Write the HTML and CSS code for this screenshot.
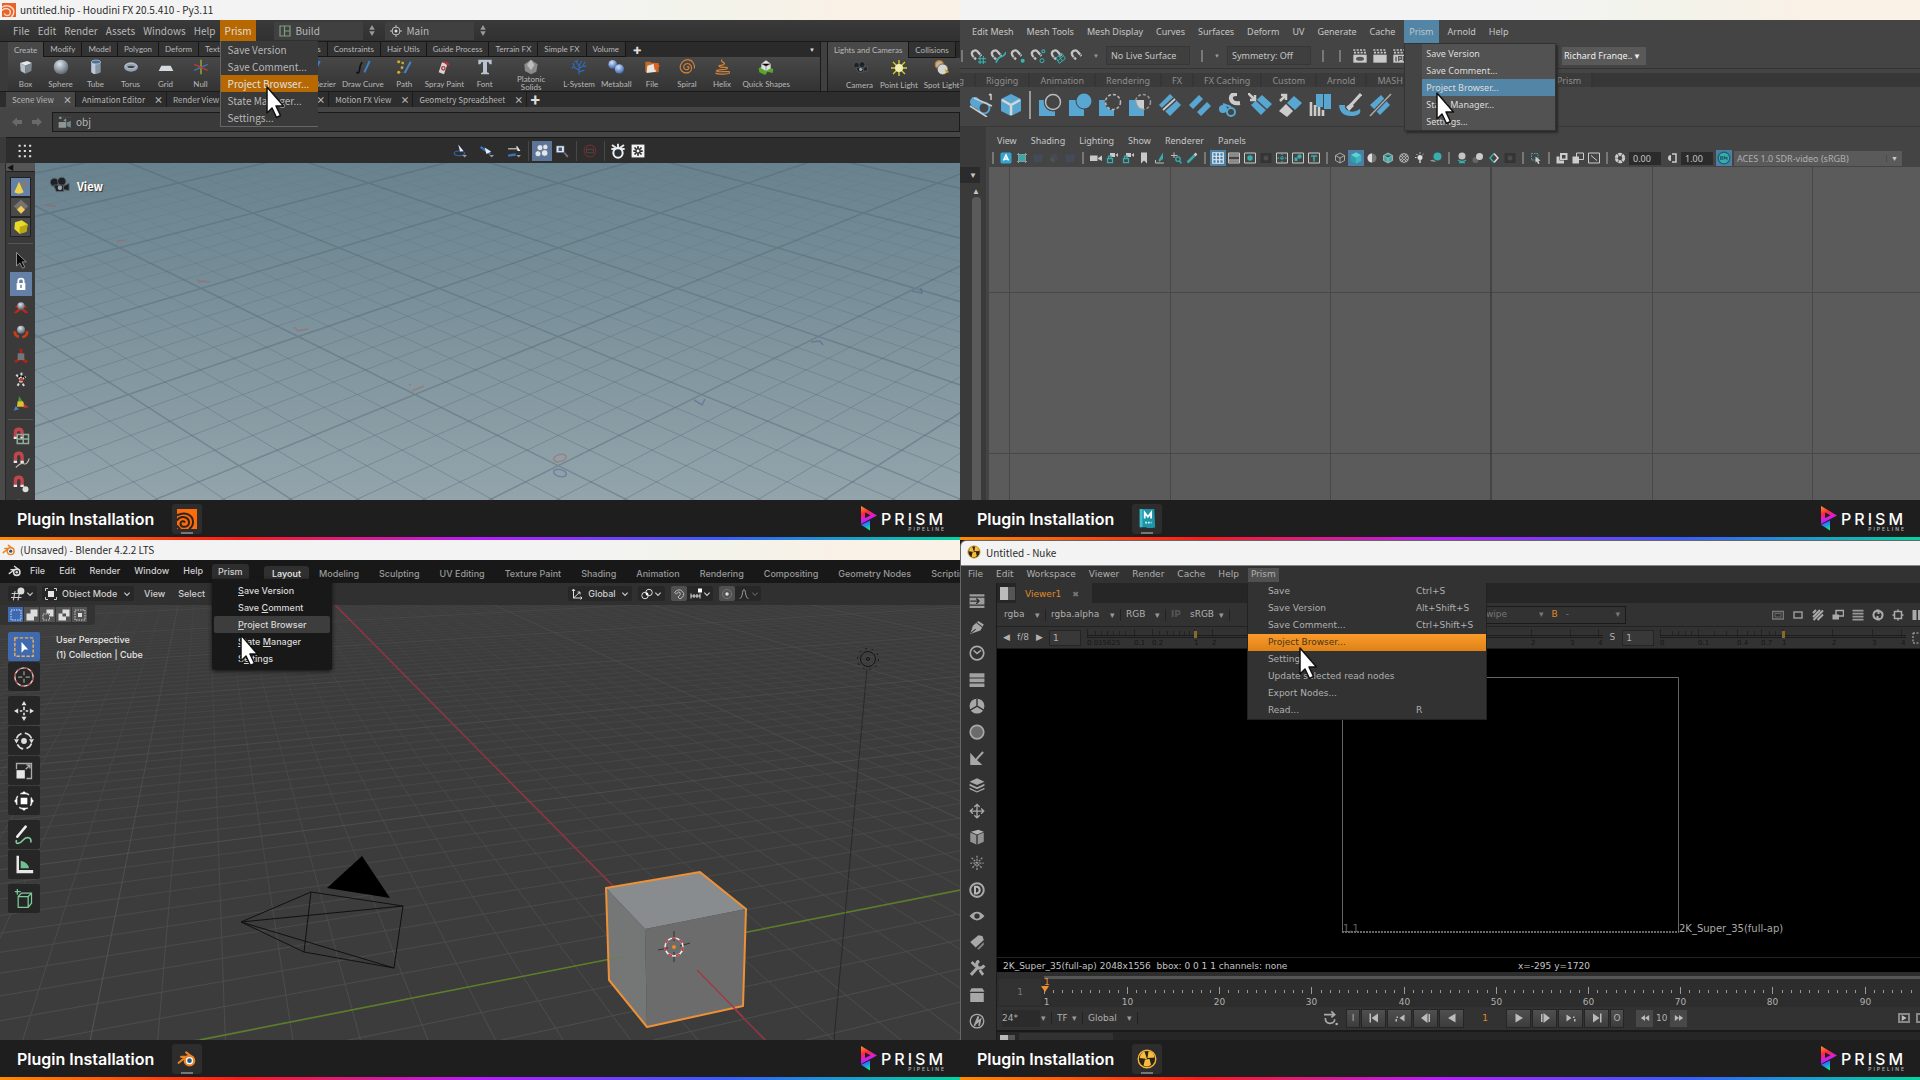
FILE: index.html
```
<!DOCTYPE html>
<html lang="en">
<head>
<meta charset="utf-8">
<title>Plugin Installation</title>
<link rel="stylesheet" href="styles.css">
</head>
<body>
<svg class="sprite" aria-hidden="true">
  <defs>
    <linearGradient id="lg-warm" x1="0" y1="0" x2="0.3" y2="1"><stop offset="0" stop-color="#ffa01c"/><stop offset=".4" stop-color="#ff2a3c"/><stop offset=".75" stop-color="#d020e8"/><stop offset="1" stop-color="#8a30ff"/></linearGradient>
    <linearGradient id="lg-cool" x1="0" y1="0" x2="0.4" y2="1"><stop offset="0" stop-color="#7a3cff"/><stop offset=".5" stop-color="#2a7bff"/><stop offset="1" stop-color="#10e090"/></linearGradient>
    <radialGradient id="ball" cx=".4" cy=".3" r=".7"><stop offset="0" stop-color="#dde4ec"/><stop offset="1" stop-color="#5c6670"/></radialGradient>
    <radialGradient id="blue-ball" cx=".4" cy=".3" r=".7"><stop offset="0" stop-color="#d5e4fa"/><stop offset="1" stop-color="#3d68ae"/></radialGradient>
  </defs>
  <symbol id="cursor" viewBox="0 0 20 34"><path d="M2 2V28L7 23L11.500 32.500L15.500 30.500L11 21H18.500Z" fill="#fff" stroke="#111" stroke-width="1.500" stroke-linejoin="round"/></symbol>
  <symbol id="prism" viewBox="0 0 16 25"><path d="M0 0L16 9.500L0 18ZM4 6.500V12L9.500 9.300Z" fill="url(#lg-warm)" fill-rule="evenodd"/><path d="M0 18.700L9 14.500V24.500Z" fill="url(#lg-cool)"/></symbol>
  <symbol id="houdini" viewBox="0 0 20 20"><path fill="#ff6a0a" d="M0 0H20V20H0Z"/><path fill="none" stroke="#2a2522" stroke-width="2" d="M0 6.500C8 2 16 6 16 13c0 3-1.500 5.500-4 7M0 11.500C2 8 6 7.500 8.500 8.500c4 1.500 4.500 6 2 8.200-2.500 2-7 1.300-7-2 0-2.500 3.500-3.500 4.500-1.200M0 16.500c1 2 2 3 3.500 3.500"/></symbol>
  <symbol id="houdini-light" viewBox="0 0 20 20"><path fill="#e8632a" d="M0 0H20V20H0Z"/><path fill="none" stroke="#fbd9c8" stroke-width="2" d="M0 6C8 1 17 6 17 13c0 3-1.500 5-4 7M0 11C2 8 6 7.500 8.500 8.500c4 1.500 4.500 6 2 8.200-2.500 2-7 1.300-7-2"/></symbol>
  <symbol id="blender" viewBox="0 0 24 20"><path fill="none" stroke="#ee8220" stroke-width="2.600" stroke-linecap="round" d="M2 14.500L11 7.500M5 7.500H16M11 2L18.500 8"/><circle cx="15" cy="12" r="7" fill="#ee8220"/><circle cx="15" cy="12" r="4.400" fill="#fff"/><circle cx="15" cy="12" r="2.800" fill="#265787"/></symbol>
  <symbol id="blender-white" viewBox="0 0 24 20"><path fill="none" stroke="#ddd" stroke-width="2.200" stroke-linecap="round" d="M2 14.500L11 7.500M5 7.500H16M11 2L18.500 8"/><circle cx="15" cy="12" r="5.500" fill="none" stroke="#ddd" stroke-width="2.600"/><circle cx="15" cy="12" r="2.200" fill="#ddd"/></symbol>
  <symbol id="maya" viewBox="0 0 20 22"><path fill="#1f93a8" d="M2 0H18L19 20Q14 22 8 20H2Z"/><path fill="#3cc0cf" d="M2 0H5V20H2Z"/><path fill="none" stroke="#f4ffff" stroke-width="2" d="M7.500 10.500V4L11 8.500L14.500 4V10.500"/><path stroke="#c9f2f5" stroke-width="2" stroke-dasharray="2 1" d="M8 15H15"/></symbol>
  <symbol id="nuke" viewBox="0 0 20 20"><circle cx="10" cy="10" r="8.800" fill="#2b2416" stroke="#f3b637" stroke-width="1.400"/><path fill="#f8bd3e" d="M10 10L2.800 9C3 5.500 5 3.200 7.500 2.500ZM10.500 9L11.500 2.300C15 2.500 17 5 17.500 8.500ZM8 10.500L12.500 10L14 15.500C12 18 8.500 18 6.500 16.500Z"/></symbol>

  <symbol id="box3d" viewBox="0 0 24 24"><path fill="#e4e8ec" d="M3 6L14 3L21 6L11 10Z"/><path fill="#b6bec6" d="M3 6L11 10V22L4 18Z"/><path fill="#7d8791" d="M11 10L21 6L20 18L11 22Z"/></symbol>
  <symbol id="sphere" viewBox="0 0 24 24"><circle cx="12" cy="12" r="11" fill="url(#ball)"/></symbol>
  <symbol id="tube" viewBox="0 0 24 24"><path fill="#8796a5" d="M5 4V20Q12 25 19 20V4Z"/><path fill="#bccada" d="M5 4V20Q8 23 11 23V4Z"/><ellipse cx="12" cy="4.500" rx="7" ry="3" fill="#4b6f98" stroke="#ccd6e0"/></symbol>
  <symbol id="torus" viewBox="0 0 24 24"><ellipse cx="12" cy="12" rx="8" ry="4.500" fill="none" stroke="#94a2b5" stroke-width="5"/><ellipse cx="12" cy="10.500" rx="8.500" ry="4" fill="none" stroke="#c9d0da" stroke-width="1"/></symbol>
  <symbol id="gridp" viewBox="0 0 24 24"><path fill="#d5dae0" d="M5 10H19L23 18H1Z"/></symbol>
  <symbol id="null" viewBox="0 0 24 24"><path d="M12 1V23" stroke="#a5b32d" stroke-width="2"/><path d="M2 17L22 8" stroke="#3b76b8" stroke-width="2"/><path d="M2 8L22 17" stroke="#c33930" stroke-width="2"/></symbol>
  <symbol id="curve" viewBox="0 0 24 24"><path d="M2 20C10 24 4 10 11 5" stroke="#111" stroke-width="2.500" fill="none"/><path d="M14 20L22 3" stroke="#3f80c4" stroke-width="3"/></symbol>
  <symbol id="path" viewBox="0 0 24 24"><path d="M4 4H11V12L4 20H12" stroke="#555" fill="none"/><g fill="#d6ad22"><circle cx="4" cy="4" r="2.300"/><circle cx="10" cy="6" r="2"/><circle cx="9" cy="13" r="2"/><circle cx="4" cy="20" r="2.300"/></g><path d="M13 21L22 4" stroke="#4785c0" stroke-width="3"/></symbol>
  <symbol id="spray" viewBox="0 0 24 24"><path fill="#d8d4d4" d="M9 5L17 8L12 23L4 20Z"/><path fill="#bb2e36" d="M10 3L18 5L21 10L16 9Z"/><circle cx="11" cy="14" r="2.500" fill="none" stroke="#b93a3a" stroke-width="2"/></symbol>
  <symbol id="fontt" viewBox="0 0 24 24"><path fill="#b9c3cf" d="M2 1H22V8H19L17 4.500H15V20L18 21V23H6V21L9 20V4.500H7L5 8H2Z"/></symbol>
  <symbol id="platonic" viewBox="0 0 24 24"><path fill="#8b8b8b" d="M12 1L22 8L20 19L12 23L3 18L2 8Z"/><path fill="#bdbdbd" d="M12 1L17 9L12 17L6 9Z"/></symbol>
  <symbol id="lsys" viewBox="0 0 24 24"><path d="M12 23V10M12 17L4 12L1 14M5 12L3 6M12 14L19 10L23 12M18 10L21 4M12 11L8 4L5 3M8 5L10 1M12 11L16 3M12 19L20 17" stroke="#2f6cb9" stroke-width="1.700" fill="none"/></symbol>
  <symbol id="meta" viewBox="0 0 24 24"><circle cx="7" cy="8" r="6.500" fill="url(#blue-ball)"/><circle cx="17" cy="15" r="7" fill="url(#blue-ball)"/></symbol>
  <symbol id="file" viewBox="0 0 24 24"><path fill="#c46a28" d="M2 4H10L12 6H22V20H2Z"/><path fill="#e9e6e2" d="M5 10L15 7L18 19L4 21Z"/><path fill="#e0601c" d="M14 5L24 10L16 17Z"/></symbol>
  <symbol id="spiral" viewBox="0 0 24 24"><path fill="none" stroke="#cf8136" stroke-width="1.800" d="M12 12c2-2 4 1 2 3s-7 1-7-3 5-7 9-4 4 10-1 12-12 0-13-6S6 1 13 1s11 7 10 13"/></symbol>
  <symbol id="helix" viewBox="0 0 24 24"><path fill="none" stroke="#cf8136" stroke-width="1.900" d="M12 1C9 5 18 5 15 8S6 8 8 11s13 0 12 3-17 1-16 4 21-1 20 2-18 4-22 1"/></symbol>
  <symbol id="quick" viewBox="0 0 24 24"><path fill="#5aa52c" d="M1 14L8 10L23 15L22 21L14 19L11 24L2 20Z"/><path fill="#dcdfe0" d="M5 7L12 2L19 7V14L12 18L5 14Z"/><path stroke="#777" d="M5 7L12 11L19 7M12 11V18"/></symbol>
  <symbol id="cam" viewBox="0 0 24 24"><g fill="#1d2024" stroke="#5a6268"><circle cx="7" cy="8" r="4.500"/><circle cx="15" cy="7" r="4.500"/><path d="M6 11H17V18H9Z"/><path d="M17 12L23 9V17L17 16Z"/></g><circle cx="13" cy="14" r="2.500" fill="#9aa4ad"/></symbol>
  <symbol id="bulb" viewBox="0 0 24 24"><path stroke="#d8d02b" stroke-width="2" d="M12 0V24M0 12H24M3 3L21 21M21 3L3 21"/><circle cx="12" cy="12" r="6" fill="#f2efb4"/></symbol>
  <symbol id="spot" viewBox="0 0 24 24"><circle cx="8" cy="7" r="6" fill="#b8b4a8" stroke="#c87a24" stroke-width="2"/><circle cx="13" cy="14" r="8" fill="#d6d5d0" stroke="#444"/><path fill="#cfa51e" d="M16 13L23 18L18 20Z"/></symbol>
  <symbol id="cone" viewBox="0 0 24 24"><circle cx="16" cy="8" r="6.500" fill="#777d84"/><path fill="#f0d04d" d="M9 4L16 20Q9 24 2 20Z"/></symbol>
  <symbol id="diamond" viewBox="0 0 24 24"><path fill="#77736b" d="M12 1L23 11L12 21L1 11Z"/><path fill="#f0cd5d" d="M12 10L18 16L12 22L6 16Z"/></symbol>
  <symbol id="ycube" viewBox="0 0 24 24"><path fill="#e8d92a" d="M3 5L13 2L22 8L20 19L10 22L2 15Z"/><path fill="#b9a70e" d="M10 12L22 8L20 19L10 22Z"/></symbol>
  <symbol id="arrow-b" viewBox="0 0 24 24"><path fill="#0b0b0b" stroke="#999" stroke-width="1.200" d="M6 2V20L10.500 16L14 23L17 21.500L13.500 14.500H19Z"/></symbol>
  <symbol id="lock" viewBox="0 0 24 24"><path fill="none" stroke="#fff" stroke-width="2.600" d="M8 11V7.500Q8 4 12 4T16 7.500V11"/><path fill="#fff" d="M5.500 10.500H18.500V21H5.500Z"/><path stroke="#5a7398" stroke-width="2" d="M12 13V18"/></symbol>
  <symbol id="handle1" viewBox="0 0 24 24"><path fill="#c32715" d="M1 19L9 12L12 15L5 20ZM23 19L15 12L12 15L19 20ZM4 9L9 7V11L4 12ZM20 9L15 7V11L20 12Z"/><circle cx="12" cy="9" r="5.500" fill="url(#ball)"/></symbol>
  <symbol id="handle2" viewBox="0 0 24 24"><path fill="none" stroke="#cf3b16" stroke-width="4" d="M3 11Q2 17 9 19M21 11Q22 17 14 20"/><circle cx="12" cy="8.500" r="6" fill="url(#ball)"/></symbol>
  <symbol id="handle3" viewBox="0 0 24 24"><path fill="#b32314" d="M10 1H14V9H10ZM1 20L9 15L12 18L5 22ZM23 20L15 15L12 18L19 23Z"/><path fill="#70777c" d="M7 8H17V18H7Z"/></symbol>
  <symbol id="bones" viewBox="0 0 24 24"><path stroke="#d9d9d9" stroke-width="3" stroke-dasharray="4 2" d="M5 4L12 12L19 7M13 1L11 13M12 12L6 22M12 12L17 22"/><path fill="#c3402f" d="M10 9H15V14H10Z"/></symbol>
  <symbol id="gizmo" viewBox="0 0 24 24"><path fill="#3fa62c" d="M9 0L14 8H8Z"/><path fill="#d8c32a" d="M7 8H15L18 16H6Z"/><path fill="#c93434" d="M16 12L24 17L16 18Z"/><path fill="#4d7ec2" d="M1 22L4 15L9 20Z"/></symbol>
  <symbol id="mag-r" viewBox="0 0 24 24"><path fill="none" stroke="#c0464c" stroke-width="4.500" d="M4.500 14V8Q4.500 3 9 3T13.500 8V14"/><path stroke="#e9e9e9" stroke-width="4.500" d="M4.500 13V16M13.500 13V16"/></symbol>
  <symbol id="disc-cursor" viewBox="0 0 24 24"><ellipse cx="11" cy="16" rx="9" ry="4" fill="none" stroke="#33619d" stroke-width="2"/><path fill="#e6ecf2" d="M9 1L18 12L12 13Z"/><path fill="#999" d="M16 19H24L20 23Z"/></symbol>
  <symbol id="line-cursor" viewBox="0 0 24 24"><path stroke="#3a72bb" stroke-width="4" d="M1 5L18 17"/><path fill="#e6ecf2" d="M8 6L19 13L11 17Z"/><path fill="#999" d="M16 19H24L20 23Z"/></symbol>
  <symbol id="flow-cursor" viewBox="0 0 24 24"><path fill="none" stroke="#3a72bb" stroke-width="4" d="M2 20L15 18"/><path fill="none" stroke="#aaa" stroke-width="2.500" d="M2 8H18L16 4"/><path fill="#e6ecf2" d="M17 3L23 12L18 12Z"/><path fill="#999" d="M16 19H24L20 23Z"/></symbol>
  <symbol id="dots" viewBox="0 0 24 24"><path stroke="#ddd" stroke-width="3.600" stroke-dasharray="3.600 5.400" d="M1 3H23M1 12H23M1 21H23"/></symbol>
  <symbol id="bubbles" viewBox="0 0 24 24"><g fill="#e3e5e8" stroke="#4c6384"><circle cx="9" cy="7" r="4.500"/><circle cx="17" cy="6" r="4"/><circle cx="6" cy="16" r="4.500"/><circle cx="16" cy="15" r="5"/></g></symbol>
  <symbol id="zoomrect" viewBox="0 0 24 24"><path fill="#e6e6e6" stroke="#20304e" d="M2 3H16V15H2Z"/><path fill="#3c5c8e" d="M6 6H12V12H6Z"/><path stroke="#777" stroke-width="3" d="M16 15L22 22"/></symbol>
  <symbol id="stop" viewBox="0 0 24 24"><circle cx="12" cy="12" r="10" fill="none" stroke="#6e2e2e" stroke-width="2"/><path fill="none" stroke="#5c4a4a" stroke-width="1.500" d="M6 9H18V15H6Z"/></symbol>
  <symbol id="bee" viewBox="0 0 24 24"><path stroke="#e4e4e4" stroke-width="3" d="M3 3L10 8M21 3L14 8M2 9H22M12 1V8"/><circle cx="12" cy="15" r="7" fill="#283038" stroke="#f0f0f0" stroke-width="3"/></symbol>
  <symbol id="gearbox" viewBox="0 0 24 24"><path fill="#f2f2f2" d="M1 1H23V23H1Z"/><path stroke="#2c2c2c" stroke-width="3" d="M12 4V20M4 12H20M6 6L18 18M18 6L6 18"/><circle cx="12" cy="12" r="2.500" fill="#f2f2f2"/></symbol>
  <symbol id="back" viewBox="0 0 24 24"><path fill="#6a6a6a" d="M2 12L12 3V8H22V16H12V21Z"/></symbol>
  <symbol id="fwd" viewBox="0 0 24 24"><path fill="#6a6a6a" d="M22 12L12 3V8H2V16H12V21Z"/></symbol>
  <symbol id="layout" viewBox="0 0 24 24"><path fill="none" stroke="#7fa080" stroke-width="2.400" d="M2 2H22V22H2ZM11 2V22M11 12H22"/></symbol>
  <symbol id="target" viewBox="0 0 24 24"><circle cx="12" cy="12" r="8" fill="none" stroke="#bbb" stroke-width="2"/><circle cx="12" cy="12" r="3" fill="#ddd"/><path stroke="#bbb" stroke-width="2" d="M12 0V6M12 18V24M0 12H6M18 12H24"/></symbol>
  <symbol id="objnet" viewBox="0 0 24 24"><path fill="#8f9594" d="M2 3H6V7H2ZM9 9L14 6V12ZM1 12H14V22H1Z"/><path fill="#6f8a86" d="M15 13L22 10V22L15 19Z"/><path stroke="#666" stroke-dasharray="2 2" d="M8 4H22"/></symbol>
  <symbol id="updown" viewBox="0 0 8 14"><path fill="#999" d="M4 0L7.500 6H.5ZM4 14L.5 8H7.500Z"/></symbol>

  <symbol id="magnet" viewBox="0 0 24 24"><path fill="none" stroke="#c4c4c4" stroke-width="3.400" d="M4 12Q1 7 5 4.500T12 6L17 12M4 12L9 17"/><path stroke="#444" stroke-width="1.500" d="M5 15L8 12M13 13L17 9"/></symbol>
  <symbol id="m-grid" viewBox="0 0 24 24"><path d="M12 16H24M12 21H24M15 12V24M20 12V24" stroke="#37b5b5" stroke-width="1.500"/></symbol>
  <symbol id="m-curve" viewBox="0 0 24 24"><path d="M9 22Q12 14 17 13T24 6" stroke="#37b5b5" stroke-width="2.500" fill="none"/></symbol>
  <symbol id="m-dot" viewBox="0 0 24 24"><circle cx="19" cy="19" r="3" fill="#37b5b5"/></symbol>
  <symbol id="m-pts" viewBox="0 0 24 24"><g fill="none" stroke="#37b5b5" stroke-width="1.500"><path d="M18 3H22V7H18Z"/><circle cx="18" cy="19" r="3"/></g></symbol>
  <symbol id="m-plane" viewBox="0 0 24 24"><path d="M9 15L18 8L23 16L14 23ZM12 19L20 12M13 11L18 19" fill="none" stroke="#37b5b5" stroke-width="1.500"/></symbol>
  <symbol id="clap" viewBox="0 0 24 24"><path fill="#c9c9c9" d="M2 10H22V22H2Z"/><path stroke="#c9c9c9" stroke-width="2.500" stroke-dasharray="3 2" d="M2 3H22M3 7H22"/></symbol>
  <symbol id="sh-pipes" viewBox="0 0 24 24"><path fill="#58a7d3" d="M3 4L13 9V19L3 13Z"/><circle cx="6" cy="9" r="5" fill="#58a7d3"/><circle cx="15" cy="15" r="5.500" fill="#444" stroke="#58a7d3" stroke-width="2"/><path stroke="#ccc" stroke-width="1.500" d="M1 13L18 24M5 5L23 13M22 1V7M20 2L22 1"/></symbol>
  <symbol id="sh-cube" viewBox="0 0 24 24"><path fill="#58a7d3" d="M12 1L22 6V18L12 23L2 18V6Z"/><path fill="none" stroke="#d5d5d5" stroke-width="2.500" d="M3 7L12 12L21 7M12 12V22"/></symbol>
  <symbol id="sh-diff" viewBox="0 0 24 24"><path fill="#58a7d3" d="M1 7H17V23H1Z"/><circle cx="15" cy="9" r="9.500" fill="#444"/><circle cx="15" cy="9" r="7.500" fill="none" stroke="#bbb" stroke-width="1.500"/><path fill="none" stroke="#58a7d3" stroke-width="1.500" d="M5 9A9 9 0 0 0 14 19"/></symbol>
  <symbol id="sh-union" viewBox="0 0 24 24"><path fill="#58a7d3" d="M1 7H16V23H1Z"/><circle cx="16" cy="8" r="8.500" fill="#444"/><circle cx="16" cy="8" r="7.500" fill="#58a7d3"/></symbol>
  <symbol id="sh-sub" viewBox="0 0 24 24"><path fill="#58a7d3" d="M1 7H7A8 8 0 0 0 16 17V23H1Z"/><circle cx="15" cy="9" r="7.500" fill="none" stroke="#bbb" stroke-width="1.500" stroke-dasharray="3 2"/></symbol>
  <symbol id="sh-int" viewBox="0 0 24 24"><path fill="#58a7d3" d="M1 7H16V23H1Z"/><path fill="#ccc" d="M8 7H16V16Q9 16 8 7Z"/><circle cx="15" cy="9" r="7.500" fill="none" stroke="#999" stroke-width="1.500" stroke-dasharray="3 2"/></symbol>
  <symbol id="sh-bridge" viewBox="0 0 24 24"><path fill="#58a7d3" d="M1 12L12 1L23 12L12 23Z"/><path stroke="#444" stroke-width="5" d="M5 17L17 6"/><path stroke="#ccc" stroke-width="1.800" d="M5 17L17 6"/></symbol>
  <symbol id="sh-open" viewBox="0 0 24 24"><path fill="#58a7d3" d="M1 12L11 2L15 6L5 16ZM9 19L19 9L23 13L13 23Z"/></symbol>
  <symbol id="sh-wrench" viewBox="0 0 24 24"><circle cx="5" cy="16" r="4" fill="#58a7d3"/><circle cx="13" cy="19" r="4" fill="none" stroke="#58a7d3" stroke-width="2"/><path fill="none" stroke="#ccc" stroke-width="4" d="M19 1Q12 1 13 6T22 10"/><path stroke="#58a7d3" stroke-width="2" d="M5 11L13 14"/></symbol>
  <symbol id="sh-ext" viewBox="0 0 24 24"><path fill="#58a7d3" d="M3 12L14 2L24 11L13 22Z"/><path stroke="#444" stroke-width="1.500" d="M8 7L19 17"/><path stroke="#ccc" stroke-width="2.500" d="M0 0L6 6M7 2V7H2"/></symbol>
  <symbol id="sh-bev" viewBox="0 0 24 24"><path fill="#58a7d3" d="M9 10L16 3L24 10L17 17Z"/><path fill="#ccc" d="M1 18L8 11L15 18L9 24Z"/><path stroke="#ccc" stroke-width="2.500" d="M2 8L8 2M3 2H8V7"/></symbol>
  <symbol id="sh-comb" viewBox="0 0 24 24"><path fill="#58a7d3" d="M8 1H15V14H8ZM16 1H23V16H16Z"/><path stroke="#ccc" stroke-width="2.600" d="M3 9V23M7 12V23M11 14V23M15 17V23"/></symbol>
  <symbol id="sh-brush" viewBox="0 0 24 24"><path fill="#58a7d3" d="M1 12Q2 23 13 23T22 16Q16 20 11 18T7 12Z"/><path stroke="#ccc" stroke-width="3" d="M23 1L13 12"/><path fill="#ccc" d="M8 14L13 10L16 13L11 18Z"/></symbol>
  <symbol id="sh-cut" viewBox="0 0 24 24"><path fill="#58a7d3" d="M2 12L13 2L22 12L12 22Z"/><path stroke="#444" stroke-width="3.500" d="M2 23L23 1"/><path stroke="#aaa" stroke-width="1.500" d="M2 23L23 1"/></symbol>
  <symbol id="p-a" viewBox="0 0 24 24"><rect x="1" y="1" width="22" height="22" rx="3" fill="#35a5cf"/><path fill="none" stroke="#fff" stroke-width="3" d="M7 17L12 6L17 17M9 14H15"/></symbol>
  <symbol id="p-box" viewBox="0 0 24 24"><path fill="#35a9aa" d="M5 5H19V19H5Z"/><path stroke="#8a9a9a" stroke-width="2" fill="none" d="M2 5H22M2 19H22M5 2V22M19 2V22"/></symbol>
  <symbol id="p-dim" viewBox="0 0 24 24"><path fill="#434a58" d="M3 5H21V20H3Z"/></symbol>
  <symbol id="p-dimball" viewBox="0 0 24 24"><circle cx="12" cy="12" r="8" fill="#4b4751"/><path fill="#405a50" d="M12 12V20A8 8 0 0 1 4 12Z"/></symbol>
  <symbol id="p-cam" viewBox="0 0 24 24"><path fill="#c9c9c9" d="M0 7H15V18H0ZM16 12L24 7V18L16 14Z"/></symbol>
  <symbol id="p-camlock" viewBox="0 0 24 24"><path fill="#c9c9c9" d="M8 2H18V10H8ZM19 6L24 2V10Z"/><path fill="none" stroke="#39adad" stroke-width="2.500" d="M3 13H13V21H3ZM5 13V8H10V13"/></symbol>
  <symbol id="p-mark" viewBox="0 0 24 24"><path fill="#c9c9c9" d="M6 1H18V23L12 17L6 23Z"/></symbol>
  <symbol id="p-leaf" viewBox="0 0 24 24"><path fill="#39adad" d="M9 16L18 1V14L10 20Z"/><path fill="none" stroke="#bbb" stroke-width="2" d="M3 16V22H20"/></symbol>
  <symbol id="p-pan" viewBox="0 0 24 24"><path fill="none" stroke="#bbb" stroke-width="2" d="M8 1V12M2 7H15"/><circle cx="16" cy="14" r="4.500" fill="none" stroke="#39adad" stroke-width="2.500"/><path stroke="#39adad" stroke-width="3" d="M19 18L23 23"/></symbol>
  <symbol id="p-pen" viewBox="0 0 24 24"><path stroke="#39adad" stroke-width="5" d="M3 21L17 7"/><path stroke="#ccc" stroke-width="5" d="M17 7L21 3"/></symbol>
  <symbol id="p-grid" viewBox="0 0 24 24"><path fill="none" stroke="#e4eef4" stroke-width="2" d="M3 3H21V21H3ZM9 3V21M15 3V21M3 9H21M3 15H21"/></symbol>
  <symbol id="p-film" viewBox="0 0 24 24"><path fill="none" stroke="#c9c9c9" stroke-width="2" d="M1 2H23V22H1ZM1 8H23M1 16H23"/><path stroke="#c9c9c9" stroke-width="3" stroke-dasharray="2 2" d="M1 5H23M1 19H23"/></symbol>
  <symbol id="p-rec" viewBox="0 0 24 24"><path fill="none" stroke="#c9c9c9" stroke-width="2" d="M1 2H23V22H1Z"/><circle cx="12" cy="12" r="5.500" fill="#39adad"/></symbol>
  <symbol id="p-recdim" viewBox="0 0 24 24"><path fill="#353535" d="M1 2H23V22H1Z"/><circle cx="12" cy="12" r="5" fill="#4d4d4d"/></symbol>
  <symbol id="p-shapes" viewBox="0 0 24 24"><path fill="none" stroke="#c9c9c9" stroke-width="2" d="M1 2H23V22H1Z"/><circle cx="15" cy="9" r="4.500" fill="#39adad"/><path fill="#39adad" d="M5 11H11V18H5Z"/></symbol>
  <symbol id="p-cross" viewBox="0 0 24 24"><path fill="none" stroke="#c9c9c9" stroke-width="2" d="M1 2H23V22H1Z"/><path stroke="#39adad" stroke-width="2.500" stroke-dasharray="3 2" d="M12 3V21M3 12H21"/></symbol>
  <symbol id="p-t" viewBox="0 0 24 24"><path fill="none" stroke="#c9c9c9" stroke-width="2" d="M1 2H23V22H1Z"/><path stroke="#39adad" stroke-width="3" d="M6 8H18M12 8V19"/></symbol>
  <symbol id="p-wire" viewBox="0 0 24 24"><path fill="none" stroke="#b9b9b9" stroke-width="1.700" d="M12 2L21 7V17L12 22L3 17V7ZM3 7L12 12L21 7M12 12V22"/></symbol>
  <symbol id="p-tex" viewBox="0 0 24 24"><path fill="#39adad" stroke="#b9b9b9" stroke-width="1.700" d="M12 2L21 7V17L12 22L3 17V7ZM3 7L12 12L21 7M12 12V22"/></symbol>
  <symbol id="p-solid" viewBox="0 0 24 24"><path fill="#5fd0d4" d="M12 2L21 7L12 12L3 7Z"/><path fill="#2da2aa" d="M3 7L12 12V22L3 17Z"/><path fill="#3cb8be" d="M21 7V17L12 22V12Z"/></symbol>
  <symbol id="p-half" viewBox="0 0 24 24"><circle cx="12" cy="12" r="9" fill="#777"/><path fill="#ddd" d="M12 3V21A9 9 0 0 1 12 3Z"/></symbol>
  <symbol id="p-mesh" viewBox="0 0 24 24"><circle cx="12" cy="12" r="10" fill="#a9a9a9"/><path stroke="#484848" stroke-width="1.500" d="M5 5L19 19M9 3L21 15M3 9L15 21M19 5L5 19M15 3L3 15M21 9L9 21"/></symbol>
  <symbol id="p-light" viewBox="0 0 24 24"><circle cx="12" cy="11" r="5" fill="#ddd"/><path stroke="#ccc" stroke-width="2" stroke-dasharray="3 17" d="M2 11H22M5 4L19 18M19 4L5 18"/><path stroke="#ccc" stroke-width="3" d="M12 16V22M12 1V3"/></symbol>
  <symbol id="p-shadow" viewBox="0 0 24 24"><circle cx="12" cy="8" r="7" fill="#c5c5c5"/><path fill="none" stroke="#39adad" stroke-width="2.500" d="M4 16Q12 22 20 16M6 21H18"/></symbol>
  <symbol id="p-cast" viewBox="0 0 24 24"><circle cx="15" cy="9" r="8" fill="#39adad"/><path fill="#999" d="M0 18Q6 12 12 20Z"/></symbol>
  <symbol id="p-blur" viewBox="0 0 24 24"><circle cx="7" cy="16" r="6" fill="#666"/><circle cx="15" cy="9" r="7" fill="#ccc"/></symbol>
  <symbol id="p-hex" viewBox="0 0 24 24"><path fill="none" stroke="#ddd" stroke-width="3" d="M12 3L20 12L12 21"/><path fill="none" stroke="#39adad" stroke-width="3" d="M12 3L4 12L12 21"/></symbol>
  <symbol id="p-sel" viewBox="0 0 24 24"><path fill="none" stroke="#39adad" stroke-width="2" stroke-dasharray="3 2" d="M3 3H16V16H3Z"/><path fill="#ccc" d="M11 9L21 17L17 18L19 23L16 24L14 19L11 21Z"/></symbol>
  <symbol id="p-iso" viewBox="0 0 24 24"><path fill="#ccc" d="M8 2H23V16H8Z"/><path fill="#444" d="M12 6H19V13H12Z"/><path fill="#ccc" d="M1 9H7V17H16V23H1Z"/></symbol>
  <symbol id="p-iso2" viewBox="0 0 24 24"><path fill="none" stroke="#ccc" stroke-width="2" d="M9 2H23V15H9Z"/><path fill="#ccc" d="M1 9H14V23H1Z"/></symbol>
  <symbol id="p-diag" viewBox="0 0 24 24"><path fill="none" stroke="#ccc" stroke-width="2" d="M1 2H23V22H1ZM6 7L18 17"/></symbol>
  <symbol id="p-iris" viewBox="0 0 24 24"><circle cx="12" cy="12" r="7.500" fill="none" stroke="#ccc" stroke-width="6" stroke-dasharray="6.500 1.300"/></symbol>
  <symbol id="p-gamma" viewBox="0 0 24 24"><path fill="none" stroke="#ccc" stroke-width="3" d="M12 4H20V20H12"/><path fill="#ccc" d="M10 6V18A6 6 0 0 1 10 6Z"/></symbol>
  <symbol id="p-on" viewBox="0 0 24 24"><circle cx="12" cy="12" r="10" fill="#39adad" stroke="#1d5c6c" stroke-width="2"/><path stroke="#1d5c6c" stroke-width="2" fill="none" d="M6 10V14H10V10ZM13 14V10L17 14V10"/></symbol>

  <symbol id="b-chev" viewBox="0 0 24 24"><path fill="none" stroke="#ccc" stroke-width="3.500" d="M4 8L12 16L20 8"/></symbol>
  <symbol id="b-editor" viewBox="0 0 24 24"><path stroke="#ccc" stroke-width="1.800" d="M1 11H15M0 18H18M7 7L4 23M14 12L12 23"/><circle cx="17" cy="7" r="6" fill="#ddd"/></symbol>
  <symbol id="b-obj" viewBox="0 0 24 24"><path fill="#e6e6e6" d="M6 6H18V18H6Z"/><path fill="none" stroke="#ccc" stroke-width="2" d="M1 6V1H6M18 1H23V6M23 18V23H18M6 23H1V18"/></symbol>
  <symbol id="b-axes" viewBox="0 0 24 24"><path fill="none" stroke="#ddd" stroke-width="2" d="M5 3V20H22M5 20L18 8M2 6L5 2L8 6M19 17L22 20L19 23M13 8H18V13"/></symbol>
  <symbol id="b-link" viewBox="0 0 24 24"><circle cx="8" cy="15" r="6.500" fill="none" stroke="#ddd" stroke-width="2"/><circle cx="16" cy="9" r="6.500" fill="none" stroke="#ddd" stroke-width="2"/><circle cx="12" cy="12" r="2.500" fill="#fff"/></symbol>
  <symbol id="b-magnet" viewBox="0 0 24 24"><path fill="none" stroke="#bbb" stroke-width="2" d="M3 9Q12-1 19 7T14 22L10 18Q17 13 14 9T7 12Z"/></symbol>
  <symbol id="b-inc" viewBox="0 0 24 24"><path stroke="#ddd" stroke-width="2" d="M2 16H20M2 11V21M8 12V20M14 12V20M20 11V21"/><path fill="#fff" d="M16 1H24V9H16Z"/></symbol>
  <symbol id="b-prop" viewBox="0 0 24 24"><circle cx="12" cy="12" r="9" fill="none" stroke="#777" stroke-width="2"/><circle cx="12" cy="12" r="3.500" fill="#ddd"/></symbol>
  <symbol id="b-bell" viewBox="0 0 24 24"><path fill="none" stroke="#999" stroke-width="2" d="M3 21C10 21 8 3 12 3S14 21 21 21"/></symbol>
  <symbol id="b-s1" viewBox="0 0 24 24"><path fill="none" stroke="#cfe0ff" stroke-width="2" stroke-dasharray="3 2" d="M2 2H22V22H2Z"/></symbol>
  <symbol id="b-s2" viewBox="0 0 24 24"><path fill="#ddd" d="M9 1H23V15H16V23H1V9H9Z"/></symbol>
  <symbol id="b-s3" viewBox="0 0 24 24"><path fill="#ddd" d="M9 1H23V15H16V9H9Z"/><path fill="none" stroke="#ccc" stroke-width="2" stroke-dasharray="3 2" d="M2 10H15V22H2Z"/></symbol>
  <symbol id="b-s4" viewBox="0 0 24 24"><path fill="#ddd" fill-rule="evenodd" d="M9 1H23V15H16V23H1V9H9ZM9 9V15H16V9Z"/></symbol>
  <symbol id="b-s5" viewBox="0 0 24 24"><path fill="none" stroke="#ccc" stroke-width="2" stroke-dasharray="3 2" d="M2 2H22V22H2Z"/><path fill="#ddd" d="M8 8H16V16H8Z"/></symbol>
  <symbol id="b-select" viewBox="0 0 24 24"><path fill="none" stroke="#f0b050" stroke-width="1.700" stroke-dasharray="4 2" d="M1 1H23V23H1Z"/><path fill="#fff" d="M9 6L17 15L12.500 15L9 19Z"/></symbol>
  <symbol id="b-cursor" viewBox="0 0 24 24"><circle cx="12" cy="12" r="11" fill="none" stroke="#ddd" stroke-width="1.600"/><circle cx="12" cy="12" r="11" fill="none" stroke="#b33" stroke-width="1.600" stroke-dasharray="4.300 4.300"/><path stroke="#999" stroke-width="1.500" d="M12 5V10M12 14V19M5 12H10M14 12H19"/></symbol>
  <symbol id="b-move" viewBox="0 0 24 24"><path fill="#e2e2e2" d="M12 0L15 5H9ZM12 24L9 19H15ZM0 12L5 9V15ZM24 12L19 15V9ZM11 7H13V11H11ZM11 14H13V17H11ZM7 11H10V13H7ZM14 11H17V13H14Z"/></symbol>
  <symbol id="b-rot" viewBox="0 0 24 24"><path fill="none" stroke="#ddd" stroke-width="2" d="M3 9A10 10 0 0 1 9 3M13 2.500A10 10 0 0 1 21 9M21 15A10 10 0 0 1 15 21M11 21.500A10 10 0 0 1 4 16"/><path fill="#ddd" d="M0 10H6L3 15ZM24 10H18L21 15Z"/><circle cx="12" cy="12" r="3.500" fill="#ddd"/></symbol>
  <symbol id="b-scale" viewBox="0 0 24 24"><path fill="none" stroke="#aaa" stroke-width="1.600" d="M3 10V3H21V21H15M14 10L19 5M15 5H19V9"/><path fill="#e6e6e6" d="M3 11H13V21H3Z"/></symbol>
  <symbol id="b-trans" viewBox="0 0 24 24"><circle cx="12" cy="12" r="9.500" fill="none" stroke="#ddd" stroke-width="1.800" stroke-dasharray="11 4" stroke-dashoffset="5"/><path fill="#fff" d="M8 8H16V16H8ZM12 0L15 4H9ZM12 24L9 20H15ZM0 12L4 9V15ZM24 12L20 15V9Z"/></symbol>
  <symbol id="b-ann" viewBox="0 0 24 24"><path stroke="#eee" stroke-width="3" stroke-linecap="round" d="M4 14L14 2"/><path fill="none" stroke="#7fc89b" stroke-width="2" d="M3 18C1 24 7 23 11 18S22 15 20 21"/></symbol>
  <symbol id="b-meas" viewBox="0 0 24 24"><path fill="#e8e8e8" d="M3 1H6V18H23V22H3Z"/><path fill="#6fc090" d="M8 7Q17 9 18 16H8Z"/></symbol>
  <symbol id="b-add" viewBox="0 0 24 24"><path fill="none" stroke="#7cc99a" stroke-width="1.500" d="M5 9L9 5H21V17L17 22H5ZM5 9H17V22M17 9L21 5M4 0V7M1 3H8"/></symbol>

  <symbol id="n-read" viewBox="0 0 24 24"><path fill="#9c9c9c" d="M1 2H23V5H1ZM1 7H23V17H1ZM1 19H23V22H1Z"/><path fill="none" stroke="#2c2c2c" stroke-width="2" d="M2 12H15M11 8L15 12L11 16"/></symbol>
  <symbol id="n-pen" viewBox="0 0 24 24"><path fill="#a8a8a8" d="M2 22L6 10L14 3L22 8L17 17Z"/><path stroke="#333" stroke-width="1.500" d="M11 5L20 12M3 21L10 15"/></symbol>
  <symbol id="n-clock" viewBox="0 0 24 24"><circle cx="12" cy="12" r="10" fill="none" stroke="#a8a8a8" stroke-width="2.500"/><path fill="none" stroke="#a8a8a8" stroke-width="2.200" d="M7 8L12 12.500L18 8"/></symbol>
  <symbol id="n-bars" viewBox="0 0 24 24"><path fill="#a2a2a2" d="M1 2H23V8H1ZM1 9.500H23V15H1ZM1 17H23V22H1Z"/></symbol>
  <symbol id="n-pie" viewBox="0 0 24 24"><circle cx="12" cy="12" r="11" fill="#a8a8a8"/><path stroke="#323232" stroke-width="2" d="M12 12V1M12 12L2 18M12 12L22 18"/></symbol>
  <symbol id="n-circ" viewBox="0 0 24 24"><circle cx="12" cy="12" r="10" fill="#6b6b6b" stroke="#a8a8a8" stroke-width="2.500"/></symbol>
  <symbol id="n-key" viewBox="0 0 24 24"><path fill="#a8a8a8" d="M2 4L11 14L20 22H2Z"/><path stroke="#a8a8a8" stroke-width="3" d="M21 3L10 15"/></symbol>
  <symbol id="n-layers" viewBox="0 0 24 24"><path fill="#a8a8a8" d="M12 2L23 7L12 12L1 7ZM1 10L12 15L23 10V13L12 18L1 13ZM1 16L12 21L23 16V18L12 23L1 18Z"/></symbol>
  <symbol id="n-move" viewBox="0 0 24 24"><path fill="none" stroke="#a8a8a8" stroke-width="2" d="M12 2V22M2 12H22M8 6L12 2L16 6M8 18L12 22L16 18M6 8L2 12L6 16M18 8L22 12L18 16"/></symbol>
  <symbol id="n-cube" viewBox="0 0 24 24"><path fill="#b2b2b2" d="M3 4L14 1L22 4L12 8Z"/><path fill="#929292" d="M2 5L11 9V23L2 19ZM13 9L22 5V19L13 23Z"/></symbol>
  <symbol id="n-star" viewBox="0 0 24 24"><path stroke="#929292" stroke-width="2" stroke-dasharray="3 1.500" d="M12 1V23M4 4L20 20M20 4L4 20M2 12H22"/></symbol>
  <symbol id="n-deep" viewBox="0 0 24 24"><circle cx="12" cy="12" r="10" fill="none" stroke="#a8a8a8" stroke-width="3"/><path fill="none" stroke="#b8b8b8" stroke-width="3" d="M9 7H12Q16 8 16 12T12 17H9Z"/></symbol>
  <symbol id="n-eye" viewBox="0 0 24 24"><path fill="#a8a8a8" d="M1 12Q12-1 23 12Q12 25 1 12Z"/><circle cx="12" cy="12" r="4" fill="#323232"/></symbol>
  <symbol id="n-tag" viewBox="0 0 24 24"><path fill="#a8a8a8" d="M2 12L14 2L20 3L22 9L10 20Z"/><path fill="#888" d="M12 22L22 12V16L15 23Z"/></symbol>
  <symbol id="n-wrench" viewBox="0 0 24 24"><path fill="none" stroke="#a8a8a8" stroke-width="4.500" d="M3 22L13 11M15 1Q9 5 13 11Q18 14 23 8"/><path fill="none" stroke="#a8a8a8" stroke-width="4" d="M4 3L11 10M16 15L21 22"/></symbol>
  <symbol id="n-box" viewBox="0 0 24 24"><path fill="#a8a8a8" d="M4 2H20L23 7H1ZM2 9H22V22H2Z"/></symbol>
  <symbol id="n-flame" viewBox="0 0 24 24"><circle cx="12" cy="12" r="10" fill="none" stroke="#a8a8a8" stroke-width="2"/><path fill="none" stroke="#a8a8a8" stroke-width="2.500" d="M8 19L14 5L12 14L17 10L15 19"/></symbol>
  <symbol id="n-v1" viewBox="0 0 24 24"><path fill="none" stroke="#777" stroke-width="3" d="M1 5H23V20H1Z"/><path fill="none" stroke="#666" stroke-width="2" d="M6 9H18V16H6Z"/></symbol>
  <symbol id="n-v2" viewBox="0 0 24 24"><path fill="none" stroke="#999" stroke-width="3" d="M4 6H20V18H4Z"/></symbol>
  <symbol id="n-v3" viewBox="0 0 24 24"><path stroke="#aaa" stroke-width="4" d="M2 8L8 2M2 16L16 2M3 22L22 3M11 22L22 11"/></symbol>
  <symbol id="n-v4" viewBox="0 0 24 24"><path fill="none" stroke="#aaa" stroke-width="3" d="M8 3H23V14H8Z"/><path fill="#aaa" d="M1 11H14V21H1Z"/></symbol>
  <symbol id="n-v5" viewBox="0 0 24 24"><path stroke="#999" stroke-width="3.500" d="M1 3H23M1 9H23M1 15H23M1 21H23"/></symbol>
  <symbol id="n-v6" viewBox="0 0 24 24"><path fill="none" stroke="#aaa" stroke-width="4" d="M13 21Q2 19 3 11T12 4M11 3Q22 5 21 13T12 20M8 3H13V10M16 21H11V14"/></symbol>
  <symbol id="n-v7" viewBox="0 0 24 24"><path fill="none" stroke="#aaa" stroke-width="3" d="M5 5H19V19H5ZM12 1V5M12 19V23M1 12H5M19 12H23"/></symbol>
  <symbol id="n-pause" viewBox="0 0 24 24"><path fill="#aaa" d="M1 2H9V22H1ZM12 2H20V22H12Z"/></symbol>
  <symbol id="n-roi" viewBox="0 0 24 24"><path fill="none" stroke="#bbb" stroke-width="2" stroke-dasharray="4 3" d="M2 2H22V22H2Z"/></symbol>
  <symbol id="t-first" viewBox="0 0 24 24"><path fill="#bbb" d="M3 3H6V21H3ZM20 3V21L7 12Z"/></symbol>
  <symbol id="t-pkey" viewBox="0 0 24 24"><path fill="#bbb" d="M21 5V19L11 12ZM3 14H6V19H3ZM5 9H8V12H5Z"/></symbol>
  <symbol id="t-pstep" viewBox="0 0 24 24"><path fill="#bbb" d="M15 2V22L2 12ZM17 4H20V20H17Z"/></symbol>
  <symbol id="t-play" viewBox="0 0 24 24"><path fill="#bbb" d="M5 3L20 12L5 21Z"/></symbol>
  <symbol id="t-ff" viewBox="0 0 24 24"><path fill="#bbb" d="M2 5L12 12L2 19ZM12 5L22 12L12 19Z"/></symbol>
  <symbol id="t-loop" viewBox="0 0 24 24"><path fill="none" stroke="#aaa" stroke-width="2.500" d="M3 7H18M14 2L19 7L14 11M5 12Q5 20 12 20T19 14"/><circle cx="22" cy="21" r="2" fill="#aaa"/></symbol>
</svg>

<main class="board">

<section class="panel houdini" aria-label="Houdini">
  <div class="window">
    <header class="titlebar"><svg class="i14"><use href="#houdini-light"/></svg><span>untitled.hip - Houdini FX 20.5.410 - Py3.11</span></header>
    <nav class="h-menu">
      <button>File</button><button>Edit</button><button>Render</button><button>Assets</button><button>Windows</button><button>Help</button>
      <div class="menu-host"><button class="h-open">Prism</button>
        <div class="drop h-drop"><button>Save Version</button><button>Save Comment...</button><button class="on">Project Browser...</button><button>State Manager...</button><button>Settings...</button>
          <svg class="cursor"><use href="#cursor"/></svg></div>
      </div>
      <div class="h-desk">
        <label class="h-pick"><svg class="i12"><use href="#layout"/></svg><select aria-label="Desktop"><option>Build</option></select></label><svg class="ud"><use href="#updown"/></svg>
        <label class="h-pick"><svg class="i12"><use href="#target"/></svg><select aria-label="Radial menu"><option>Main</option></select></label><svg class="ud"><use href="#updown"/></svg>
      </div>
    </nav>
    <div class="h-shelves">
      <div class="h-shelf wide">
        <div class="h-tabs"><button class="on">Create</button><button>Modify</button><button>Model</button><button>Polygon</button><button>Deform</button><button>Texture</button><button>Rigging</button><button>Characters</button><button>Constraints</button><button>Hair Utils</button><button>Guide Process</button><button>Terrain FX</button><button>Simple FX</button><button>Volume</button><button class="plus" aria-label="Add shelf">✚</button><button class="more" aria-label="More shelves">▼</button></div>
        <div class="h-tools"><button><svg class="i16"><use href="#box3d"/></svg>Box</button><button><svg class="i16"><use href="#sphere"/></svg>Sphere</button><button><svg class="i16"><use href="#tube"/></svg>Tube</button><button><svg class="i16"><use href="#torus"/></svg>Torus</button><button><svg class="i16"><use href="#gridp"/></svg>Grid</button><button><svg class="i16"><use href="#null"/></svg>Null</button><button><svg class="i16"><use href="#curve"/></svg>Line</button><button><svg class="i16"><use href="#torus"/></svg>Circle</button><button><svg class="i16"><use href="#curve"/></svg>Curve Bezier</button><button><svg class="i16"><use href="#curve"/></svg>Draw Curve</button><button><svg class="i16"><use href="#path"/></svg>Path</button><button><svg class="i16"><use href="#spray"/></svg>Spray Paint</button><button><svg class="i16"><use href="#fontt"/></svg>Font</button><button class="two"><svg class="i16"><use href="#platonic"/></svg>Platonic<br>Solids</button><button><svg class="i16"><use href="#lsys"/></svg>L-System</button><button><svg class="i16"><use href="#meta"/></svg>Metaball</button><button><svg class="i16"><use href="#file"/></svg>File</button><button><svg class="i16"><use href="#spiral"/></svg>Spiral</button><button><svg class="i16"><use href="#helix"/></svg>Helix</button><button><svg class="i16"><use href="#quick"/></svg>Quick Shapes</button></div>
      </div>
      <div class="h-split"></div>
      <div class="h-shelf narrow">
        <div class="h-tabs"><button class="on">Lights and Cameras</button><button>Collisions</button></div>
        <div class="h-tools lights"><button><svg class="i16"><use href="#cam"/></svg>Camera</button><button><svg class="i16"><use href="#bulb"/></svg>Point Light</button><button><svg class="i16"><use href="#spot"/></svg>Spot Light</button></div>
      </div>
    </div>
    <div class="h-panes"><button class="on">Scene View<b>×</b></button><button>Animation Editor<b>×</b></button><button>Render View<b>×</b></button><button>Composite View<b>×</b></button><button>Motion FX View<b>×</b></button><button>Geometry Spreadsheet<b>×</b></button><button class="plus" aria-label="Add pane tab">✚</button></div>
    <div class="h-path"><button aria-label="Back"><svg class="i12"><use href="#back"/></svg></button><button aria-label="Forward"><svg class="i12"><use href="#fwd"/></svg></button><label class="h-field"><svg class="i14"><use href="#objnet"/></svg><input value="obj" aria-label="Network path"></label></div>
    <div class="h-bar"><button class="first" aria-label="Handles"><svg class="i14"><use href="#dots"/></svg></button>
      <div class="h-bar-mid"><button aria-label="View tool"><svg class="i14"><use href="#disc-cursor"/></svg></button><button aria-label="Pose tool"><svg class="i14"><use href="#line-cursor"/></svg></button><button aria-label="Flow tool"><svg class="i14"><use href="#flow-cursor"/></svg></button><span><button class="on" aria-label="Objects"><svg class="i16"><use href="#bubbles"/></svg></button><button aria-label="Zoom"><svg class="i14"><use href="#zoomrect"/></svg></button></span><span><button aria-label="Stop"><svg class="i14"><use href="#stop"/></svg></button></span><span><button aria-label="Snapshot"><svg class="i16"><use href="#bee"/></svg></button><button aria-label="Options"><svg class="i14"><use href="#gearbox"/></svg></button></span></div>
    </div>
    <div class="h-body">
      <div class="h-rail"></div>
      <div class="h-side"><span class="h-cap">◀</span>
        <div class="grp tight"><button class="on" aria-label="Objects"><svg class="i16"><use href="#cone"/></svg></button><button aria-label="Geometry"><svg class="i16"><use href="#diamond"/></svg></button><button aria-label="Dynamics"><svg class="i16"><use href="#ycube"/></svg></button></div>
        <div class="grp"><button aria-label="Select"><svg class="i18"><use href="#arrow-b"/></svg></button><button class="on" aria-label="Lock"><svg class="i16"><use href="#lock"/></svg></button><button aria-label="Move"><svg class="i16"><use href="#handle1"/></svg></button><button aria-label="Rotate"><svg class="i16"><use href="#handle2"/></svg></button><button aria-label="Scale"><svg class="i16"><use href="#handle3"/></svg></button><button aria-label="Pose"><svg class="i16"><use href="#bones"/></svg></button><button aria-label="Handles"><svg class="i16"><use href="#gizmo"/></svg></button></div>
        <div class="grp"><button aria-label="Grid snap"><svg class="i18" viewBox="0 0 24 24"><use href="#mag-r"/><path fill="none" stroke="#8fae9c" stroke-width="2" d="M7 10H22V22H7ZM15 10V22M7 16H22"/></svg></button><button aria-label="Curve snap"><svg class="i18" viewBox="0 0 24 24"><use href="#mag-r"/><path fill="none" stroke="#b8c0b8" stroke-width="1.500" d="M5 22Q12 15 16 17T23 10"/></svg></button><button aria-label="Point snap"><svg class="i18" viewBox="0 0 24 24"><use href="#mag-r"/><circle cx="18" cy="19" r="4" fill="#ddd"/></svg></button><button aria-label="Multi snap"><svg class="i18"><use href="#mag-r"/></svg></button></div>
      </div>
      <div class="view h-view">
        <svg class="canvas" viewBox="35 163 925 337" preserveAspectRatio="xMinYMin slice">
          <defs><linearGradient id="haze" gradientUnits="userSpaceOnUse" x1="0" y1="163" x2="0" y2="500"><stop offset="0" stop-color="#5a6f7c" stop-opacity=".15"/><stop offset=".5" stop-color="#56697a" stop-opacity=".35"/><stop offset="1" stop-color="#566a76" stop-opacity=".45"/></linearGradient></defs>
          <path id="h-minor" fill="none" stroke="url(#haze)" stroke-width="1"/>
          <path id="h-major" fill="none" stroke="#506470" stroke-opacity=".42" stroke-width="1.500"/>
          <g fill="none" stroke-width="1.500" stroke-opacity=".45"><g stroke="#a85c58"><ellipse cx="560" cy="458" rx="6.500" ry="3.500" transform="rotate(-15 560 458)"/><path d="M412 391L424 386M409 384L411 385M297 331L308 329M294 327L297 330M199 281L210 282M197 279L200 283M117 241L127 240M45 205L56 206"/></g><g stroke="#4d5590"><ellipse cx="560" cy="473" rx="6.500" ry="3.500" transform="rotate(15 560 473)"/><path d="M694 400L702 405L705 399M811 342L820 341L823 345M912 291L922 293L921 288"/></g></g>
        </svg>
        <div class="h-label"><svg class="i22"><use href="#cam"/></svg>View</div>
      </div>
    </div>
  </div>
  <footer class="caption"><h2>Plugin Installation</h2><span class="app"><svg class="i20"><use href="#houdini"/></svg></span><span class="logo"><svg class="mark"><use href="#prism"/></svg><span class="word">PRISM<small>PIPELINE</small></span></span></footer>
</section>

<section class="panel maya" aria-label="Maya">
  <div class="window">
    <header class="titlebar"></header>
    <nav class="m-menu"><button>Edit Mesh</button><button>Mesh Tools</button><button>Mesh Display</button><button>Curves</button><button>Surfaces</button><button>Deform</button><button>UV</button><button>Generate</button><button>Cache</button>
      <div class="menu-host"><button class="m-open">Prism</button>
        <div class="drop m-drop"><button>Save Version</button><button>Save Comment...</button><button class="on">Project Browser...</button><button>State Manager...</button><button>Settings...</button><svg class="cursor"><use href="#cursor"/></svg></div>
      </div>
      <button>Arnold</button><button>Help</button></nav>
    <div class="m-status"><i class="grip"></i>
      <div class="m-snaps"><button aria-label="Snap to grid"><svg class="i16" viewBox="0 0 24 24"><use href="#magnet"/><use href="#m-grid"/></svg></button><button aria-label="Snap to curve"><svg class="i16" viewBox="0 0 24 24"><use href="#magnet"/><use href="#m-curve"/></svg></button><button aria-label="Snap to point"><svg class="i16" viewBox="0 0 24 24"><use href="#magnet"/><use href="#m-dot"/></svg></button><button aria-label="Snap to center"><svg class="i16" viewBox="0 0 24 24"><use href="#magnet"/><use href="#m-pts"/></svg></button><button aria-label="Snap to plane"><svg class="i16" viewBox="0 0 24 24"><use href="#magnet"/><use href="#m-plane"/></svg></button><button aria-label="Make live"><svg class="i16" viewBox="0 0 24 24"><use href="#magnet"/></svg></button></div>
      <i class="tri">▼</i><input value="No Live Surface" aria-label="Live surface"><i class="grip after"></i><i class="tri">▼</i><input value="Symmetry: Off" aria-label="Symmetry"><i class="grip after"></i><i class="grip after"></i>
      <div class="m-snaps"><button aria-label="Render view"><svg class="i16" viewBox="0 0 24 24"><use href="#clap"/><ellipse cx="12" cy="16" rx="6" ry="3" fill="#555"/></svg></button><button aria-label="Render"><svg class="i16"><use href="#clap"/></svg></button><button aria-label="IPR render"><svg class="i16" viewBox="0 0 24 24"><use href="#clap"/><path fill="none" stroke="#555" stroke-width="2" d="M6 13V20M10 20V13H14V17H10M17 20V13H20V20"/></svg></button></div>
      <select class="m-user" aria-label="Account"><option>Richard Frange..</option></select><i class="m-caret">▼</i>
    </div>
    <div class="m-tabs"><span class="m-cut"><button>Sculpting</button></span><button>Rigging</button><button>Animation</button><button>Rendering</button><button>FX</button><button>FX Caching</button><button>Custom</button><button>Arnold</button><button>MASH</button><button class="push">Prism</button></div>
    <div class="m-shelf"><button aria-label="Conform"><svg class="i24"><use href="#sh-pipes"/></svg></button><button aria-label="Cube"><svg class="i24"><use href="#sh-cube"/></svg></button><i class="bar"></i><button aria-label="Difference"><svg class="i24"><use href="#sh-diff"/></svg></button><button aria-label="Union"><svg class="i24"><use href="#sh-union"/></svg></button><button aria-label="Subtract"><svg class="i24"><use href="#sh-sub"/></svg></button><button aria-label="Intersect"><svg class="i24"><use href="#sh-int"/></svg></button><button aria-label="Bridge"><svg class="i24"><use href="#sh-bridge"/></svg></button><button aria-label="Detach"><svg class="i24"><use href="#sh-open"/></svg></button><button aria-label="Cleanup"><svg class="i24"><use href="#sh-wrench"/></svg></button><button aria-label="Extrude"><svg class="i24"><use href="#sh-ext"/></svg></button><button aria-label="Bevel"><svg class="i24"><use href="#sh-bev"/></svg></button><button aria-label="Combine"><svg class="i24"><use href="#sh-comb"/></svg></button><button aria-label="Paint"><svg class="i24"><use href="#sh-brush"/></svg></button><button aria-label="Multi-cut"><svg class="i24"><use href="#sh-cut"/></svg></button></div>
    <div class="m-body">
      <aside class="m-side"><div class="m-dd">▼</div><div class="m-scroll"><span>▲</span><i></i></div></aside>
      <div class="m-main">
        <nav class="m-vmenu"><button>View</button><button>Shading</button><button>Lighting</button><button>Show</button><button>Renderer</button><button>Panels</button></nav>
        <div class="m-vbar"><i class="grip"></i><svg><use href="#p-a"/></svg><svg><use href="#p-box"/></svg><svg><use href="#p-dim"/></svg><svg><use href="#p-dimball"/></svg><svg><use href="#p-dim"/></svg><i class="grip"></i><svg><use href="#p-cam"/></svg><svg><use href="#p-camlock"/></svg><svg><use href="#p-camlock"/></svg><svg><use href="#p-mark"/></svg><svg><use href="#p-leaf"/></svg><svg><use href="#p-pan"/></svg><svg><use href="#p-pen"/></svg><i class="grip"></i><svg class="on"><use href="#p-grid"/></svg><svg><use href="#p-film"/></svg><svg><use href="#p-rec"/></svg><svg><use href="#p-recdim"/></svg><svg><use href="#p-cross"/></svg><svg><use href="#p-shapes"/></svg><svg><use href="#p-t"/></svg><i class="grip"></i><svg><use href="#p-wire"/></svg><svg class="on"><use href="#p-solid"/></svg><svg><use href="#p-half"/></svg><svg><use href="#p-tex"/></svg><svg><use href="#p-mesh"/></svg><svg><use href="#p-light"/></svg><svg><use href="#p-cast"/></svg><i class="grip"></i><svg><use href="#p-shadow"/></svg><svg><use href="#p-blur"/></svg><svg><use href="#p-hex"/></svg><svg><use href="#p-recdim"/></svg><i class="grip"></i><svg><use href="#p-sel"/></svg><i class="grip"></i><svg><use href="#p-iso"/></svg><svg><use href="#p-iso2"/></svg><svg><use href="#p-diag"/></svg><i class="grip"></i><svg><use href="#p-iris"/></svg><input value="0.00" aria-label="Exposure"><svg><use href="#p-gamma"/></svg><input value="1.00" aria-label="Gamma"><svg class="on"><use href="#p-on"/></svg><span class="m-cs"><select aria-label="View transform"><option>ACES 1.0 SDR-video (sRGB)</option></select><i>▼</i></span></div>
        <div class="view m-view"><svg class="canvas" viewBox="29 167 931 333" preserveAspectRatio="xMinYMin slice"><path stroke="#484848" d="M49.500 167V500M210.500 167V500M370.500 167V500M692.500 167V500M852.500 167V500M29 292.500H960M29 453.500H960"/><path stroke="#3d3d3d" stroke-width="1.500" d="M531 167V500"/></svg></div>
      </div>
    </div>
  </div>
  <footer class="caption"><h2>Plugin Installation</h2><span class="app"><svg class="i20"><use href="#maya"/></svg></span><span class="logo"><svg class="mark"><use href="#prism"/></svg><span class="word">PRISM<small>PIPELINE</small></span></span></footer>
</section>

<section class="panel blender" aria-label="Blender">
  <div class="window">
    <header class="titlebar"><svg class="i14"><use href="#blender"/></svg><span>(Unsaved) - Blender 4.2.2 LTS</span></header>
    <div class="b-top">
      <nav class="b-menu"><svg class="i14"><use href="#blender-white"/></svg><button>File</button><button>Edit</button><button>Render</button><button>Window</button><button>Help</button>
        <div class="menu-host"><button class="b-open">Prism</button>
          <div class="drop b-drop"><button><u>S</u>ave Version</button><button>Save <u>C</u>omment</button><button class="on"><u>P</u>roject Browser</button><button><u>S</u>tate <u>M</u>anager</button><button>S<u>e</u>ttings</button><svg class="cursor"><use href="#cursor"/></svg></div>
        </div></nav>
      <div class="b-tabs"><button class="on">Layout</button><button>Modeling</button><button>Sculpting</button><button>UV Editing</button><button>Texture Paint</button><button>Shading</button><button>Animation</button><button>Rendering</button><button>Compositing</button><button>Geometry Nodes</button><button>Scripting</button></div>
    </div>
    <div class="b-head">
      <button class="chip" aria-label="Editor type"><svg class="i14"><use href="#b-editor"/></svg><svg class="i8"><use href="#b-chev"/></svg></button>
      <label class="chip mode"><svg class="i12"><use href="#b-obj"/></svg><select aria-label="Mode"><option>Object Mode</option></select><svg class="i8"><use href="#b-chev"/></svg></label>
      <nav class="b-links"><button>View</button><button>Select</button></nav>
      <div class="b-mid">
        <label class="chip orient"><svg class="i12"><use href="#b-axes"/></svg><select aria-label="Orientation"><option>Global</option></select><svg class="i8"><use href="#b-chev"/></svg></label>
        <button class="chip" aria-label="Pivot"><svg class="i12"><use href="#b-link"/></svg><svg class="i8"><use href="#b-chev"/></svg></button>
        <div class="chip pair"><button class="lit" aria-label="Snap"><svg class="i12"><use href="#b-magnet"/></svg></button><button aria-label="Snap mode"><svg class="i12"><use href="#b-inc"/></svg><svg class="i8"><use href="#b-chev"/></svg></button></div>
        <div class="chip pair"><button class="lit" aria-label="Proportional"><svg class="i12"><use href="#b-prop"/></svg></button><button aria-label="Falloff"><svg class="i12"><use href="#b-bell"/></svg><svg class="i8 faint"><use href="#b-chev"/></svg></button></div>
      </div>
    </div>
    <div class="view b-view">
      <svg class="canvas" viewBox="0 65 960 435" preserveAspectRatio="xMinYMin slice">
        <defs><linearGradient id="fade" gradientUnits="userSpaceOnUse" x1="0" y1="60" x2="0" y2="500"><stop offset="0" stop-color="#4a4a4a" stop-opacity=".25"/><stop offset=".35" stop-color="#4a4a4a" stop-opacity=".7"/><stop offset="1" stop-color="#4d4d4d"/></linearGradient>
        <linearGradient id="fade2" gradientUnits="userSpaceOnUse" x1="0" y1="60" x2="0" y2="500"><stop offset="0" stop-color="#505050" stop-opacity=".5"/><stop offset="1" stop-color="#565656"/></linearGradient></defs>
        <path id="b-minor" fill="none" stroke="url(#fade)"/>
        <path id="b-major" fill="none" stroke="url(#fade2)"/>
        <path stroke="#97303f" stroke-width="1.300" d="M335 65L765 500"/><path stroke="#5b7f27" stroke-width="1.500" d="M200 500L960 350"/>
        <path fill="none" stroke="#111" stroke-opacity=".45" d="M867 128L834 500"/>
        <g fill="none" stroke="#151515"><circle cx="868" cy="119" r="7.500"/><circle cx="868" cy="119" r="10.500" stroke-dasharray="2 4.600"/><circle cx="868" cy="119" r="1.500"/></g>
        <path fill="#000" d="M362 316L327 348L390 358Z"/>
        <path fill="none" stroke="#111" d="M241 382L311 352L403 366L394 428L304 412ZM241 382L403 366M241 382L394 428M311 352L304 412"/>
        <path fill="#898c8e" d="M606 348L700 332L746 369L645 389Z"/><path fill="#757776" d="M606 348L645 389L647 487L609 440Z"/><path fill="#6c6c6c" d="M645 389L746 369L743 466L647 487Z"/>
        <path fill="none" stroke="#ee9036" stroke-width="2" stroke-linejoin="round" d="M606 348L700 332L746 369L743 466L647 487L609 440Z"/>
        <path stroke="#a03846" stroke-width="1.300" d="M697 430L743 477"/><path stroke="#66804c" d="M609 419L623 417"/>
        <path stroke="#333" d="M674 391V401M674 412V422M658 410L668 408M680 406L690 403"/>
        <circle cx="674" cy="407" r="9" fill="none" stroke="#eee" stroke-width="1.500"/><circle cx="674" cy="407" r="9" fill="none" stroke="#c8323c" stroke-width="1.500" stroke-dasharray="4 4"/><circle cx="674" cy="407" r="2" fill="#f08a24"/>
      </svg>
      <div class="b-modes"><button class="on" aria-label="Set"><svg class="i12"><use href="#b-s1"/></svg></button><button aria-label="Extend"><svg class="i12"><use href="#b-s2"/></svg></button><button aria-label="Subtract"><svg class="i12"><use href="#b-s3"/></svg></button><button aria-label="Invert"><svg class="i12"><use href="#b-s4"/></svg></button><button aria-label="Intersect"><svg class="i12"><use href="#b-s5"/></svg></button></div>
      <div class="b-row">
        <div class="b-tools">
          <div><button class="on" aria-label="Select box"><svg class="i20"><use href="#b-select"/></svg></button><button aria-label="Cursor"><svg class="i20"><use href="#b-cursor"/></svg></button></div>
          <div><button aria-label="Move"><svg class="i20"><use href="#b-move"/></svg></button><button aria-label="Rotate"><svg class="i20"><use href="#b-rot"/></svg></button><button aria-label="Scale"><svg class="i20"><use href="#b-scale"/></svg></button><button aria-label="Transform"><svg class="i20"><use href="#b-trans"/></svg></button></div>
          <div><button aria-label="Annotate"><svg class="i20"><use href="#b-ann"/></svg></button><button aria-label="Measure"><svg class="i20"><use href="#b-meas"/></svg></button></div>
          <div><button aria-label="Add cube"><svg class="i20"><use href="#b-add"/></svg></button></div>
        </div>
        <p class="b-info">User Perspective<br>(1) Collection | Cube</p>
      </div>
    </div>
  </div>
  <footer class="caption"><h2>Plugin Installation</h2><span class="app"><svg class="i20"><use href="#blender"/></svg></span><span class="logo"><svg class="mark"><use href="#prism"/></svg><span class="word">PRISM<small>PIPELINE</small></span></span></footer>
</section>

<section class="panel nuke" aria-label="Nuke">
  <div class="window">
    <header class="titlebar"><svg class="i14"><use href="#nuke"/></svg><span>Untitled - Nuke</span></header>
    <nav class="n-menu"><button>File</button><button>Edit</button><button>Workspace</button><button>Viewer</button><button>Render</button><button>Cache</button><button>Help</button>
      <div class="menu-host"><button class="n-open">Prism</button>
        <div class="drop n-drop"><button>Save<kbd>Ctrl+S</kbd></button><button>Save Version<kbd>Alt+Shift+S</kbd></button><button>Save Comment...<kbd>Ctrl+Shift+S</kbd></button><button class="on">Project Browser...</button><button>Settings...</button><button>Update selected read nodes</button><button>Export Nodes...</button><button>Read...<kbd>R</kbd></button><svg class="cursor"><use href="#cursor"/></svg></div>
      </div></nav>
    <div class="n-body">
      <aside class="n-side"><svg><use href="#n-read"/></svg><svg><use href="#n-pen"/></svg><svg><use href="#n-clock"/></svg><svg><use href="#n-bars"/></svg><svg><use href="#n-pie"/></svg><svg><use href="#n-circ"/></svg><svg><use href="#n-key"/></svg><svg><use href="#n-layers"/></svg><svg><use href="#n-move"/></svg><svg><use href="#n-cube"/></svg><svg><use href="#n-star"/></svg><svg><use href="#n-deep"/></svg><svg><use href="#n-eye"/></svg><svg><use href="#n-tag"/></svg><svg><use href="#n-wrench"/></svg><svg><use href="#n-box"/></svg><svg><use href="#n-flame"/></svg></aside>
      <div class="n-main">
        <div class="n-tabs"><i class="n-chip"></i><button>Viewer1<b>✖</b></button></div>
        <div class="n-ctl">
          <select class="w34" aria-label="Layer"><option>rgba</option></select><i>▾</i>
          <select class="w62" aria-label="Alpha"><option>rgba.alpha</option></select><i>▾</i>
          <select class="w30" aria-label="Display"><option>RGB</option></select><i>▾</i>
          <button class="dim">IP</button><select class="w28" aria-label="Viewer process"><option>sRGB</option></select><i>▾</i>
          <div class="n-wipe"><span>wipe</span><i>▾</i><b>B</b><em>-</em><i>▾</i></div>
          <div class="n-vicons"><svg><use href="#n-v1"/></svg><svg><use href="#n-v2"/></svg><svg><use href="#n-v3"/></svg><svg><use href="#n-v4"/></svg><svg><use href="#n-v5"/></svg><svg><use href="#n-v6"/></svg><svg><use href="#n-v7"/></svg><svg><use href="#n-pause"/></svg></div>
        </div>
        <div class="n-exp"><button aria-label="Stop down">◀</button><span>f/8</span><button aria-label="Stop up">▶</button><input type="text" value="1" aria-label="Gain">
          <div class="n-scale gain"><svg id="gain-scale"></svg><input type="range" min="0" max="100" value="21" aria-label="Gain slider"></div>
          <span>S</span><input type="text" value="1" aria-label="Saturation">
          <div class="n-scale sat"><svg id="sat-scale"></svg><input type="range" min="0" max="100" value="50" aria-label="Saturation slider"></div>
          <svg class="i12 roi"><use href="#n-roi"/></svg></div>
        <div class="view n-view"><svg class="canvas" viewBox="37 109 923 308" preserveAspectRatio="xMinYMin slice"><path fill="none" stroke="#666" d="M382.500 391.500V137.500H718.500V391.500"/><path stroke="#8a8a8a" stroke-width="1.500" stroke-dasharray="2 1" d="M382 392H719"/><text x="383" y="392" fill="#666">1,1</text><text x="719" y="392" fill="#aaa">2K_Super_35(full-ap)</text></svg></div>
        <div class="n-info"><span>2K_Super_35(full-ap) 2048x1556&nbsp; bbox: 0 0 1 1 channels: none</span><span>x=-295 y=1720</span></div>
        <div class="n-time"><span class="n-in">1</span><svg id="timeline"></svg></div>
        <div class="n-play">
          <div class="n-fps"><select class="w40 boxed" aria-label="Frame rate"><option>24*</option></select><i>▾</i><select class="w18" aria-label="Time format"><option>TF</option></select><i>▾</i><select class="w40" aria-label="Range"><option>Global</option></select><i>▾</i></div>
          <div class="n-keys"><svg class="i16"><use href="#t-loop"/></svg><button class="thin">I</button><button aria-label="First frame"><svg class="i12"><use href="#t-first"/></svg></button><button aria-label="Previous key"><svg class="i12"><use href="#t-pkey"/></svg></button><button aria-label="Step back"><svg class="i12"><use href="#t-pstep"/></svg></button><button aria-label="Play back"><svg class="i12 flip"><use href="#t-play"/></svg></button><input value="1" aria-label="Frame"><button aria-label="Play"><svg class="i12"><use href="#t-play"/></svg></button><button aria-label="Step forward"><svg class="i12 flip"><use href="#t-pstep"/></svg></button><button aria-label="Next key"><svg class="i12 flip"><use href="#t-pkey"/></svg></button><button aria-label="Last frame"><svg class="i12 flip"><use href="#t-first"/></svg></button><button class="thin">O</button></div>
          <div class="n-skip"><button aria-label="Skip back"><svg class="i10 flip"><use href="#t-ff"/></svg></button><span>10</span><button aria-label="Skip forward"><svg class="i10"><use href="#t-ff"/></svg></button></div>
          <div class="n-end"><button aria-label="Flipbook"><svg class="i8"><use href="#t-play"/></svg></button><button aria-label="Capture"></button></div>
        </div>
        <div class="n-foot"><i class="n-chip"></i><i class="n-tabstub"></i></div>
      </div>
    </div>
  </div>
  <footer class="caption"><h2>Plugin Installation</h2><span class="app"><svg class="i20"><use href="#nuke"/></svg></span><span class="logo"><svg class="mark"><use href="#prism"/></svg><span class="word">PRISM<small>PIPELINE</small></span></span></footer>
</section>
</main>
<script src="scene.js"></script>
</body>
</html>
```
FILE: styles.css
```
* { box-sizing: border-box; }
body { margin: 0; background: #1e1e1e; }
button, input, select { font: inherit; color: inherit; background: none; border: 0; padding: 0; margin: 0; border-radius: 0; outline: 0; appearance: none; min-width: 0; }
button { white-space: nowrap; display: flex; align-items: center; justify-content: center; flex: none; }
i, em, b, kbd { font-style: normal; font-family: inherit; }
svg { display: block; flex: none; }
.sprite { position: absolute; width: 0; height: 0; }
.i8 { width: 8px; height: 8px; }
.i10 { width: 10px; height: 10px; }
.i12 { width: 12px; height: 12px; }
.i14 { width: 14px; height: 14px; }
.i16 { width: 16px; height: 16px; }
.i18 { width: 18px; height: 18px; }
.i20 { width: 20px; height: 20px; }
.i22 { width: 22px; height: 22px; }
.i24 { width: 24px; height: 24px; }
.flip { transform: scaleX(-1); }
.faint { opacity: .3; }

.board { display: grid; grid-template-columns: 1fr 1fr; grid-template-rows: 1fr 1fr; height: 100vh; }
.panel { display: flex; flex-direction: column; min-width: 0; min-height: 0; overflow: hidden; }
.window { flex: 1; min-height: 0; display: flex; flex-direction: column; overflow: hidden; position: relative; }
.titlebar { flex: none; height: 20px; display: flex; align-items: center; gap: 4px; padding: 0 0 1px 2px; background: linear-gradient(90deg, #f3f3f3 60%, #f3f3ea 75%, #faf1e7 88%); color: #2a2a2a; font: 10px "Noto Sans CJK JP", sans-serif; }
.view { position: relative; flex: 1; min-height: 0; min-width: 0; overflow: hidden; }
.canvas { position: absolute; inset: 0; width: 100%; height: 100%; }
.menu-host { position: relative; display: flex; align-self: stretch; }
.drop { position: absolute; z-index: 5; top: 100%; left: 0; display: flex; flex-direction: column; }
.drop button { justify-content: flex-start; height: 17px; }
.cursor { position: absolute; width: 20px; height: 34px; }

.caption { flex: none; height: 40px; display: flex; align-items: center; padding: 0 14px 3px 17px; background: linear-gradient(90deg, #ff8a00, #ff1a1a 25%, #b81cff 50%, #3a5bff 75%, #00d6a0) bottom / 100% 3px no-repeat #1e1e1e; color: #fff; }
.caption h2 { margin: 0; font: 600 16px Inter, sans-serif; }
.app { position: relative; margin-left: 18px; width: 30px; height: 30px; border-radius: 3px; background: #2d2d2d; display: flex; align-items: center; justify-content: center; }
.app::after { content: ""; position: absolute; bottom: 0; left: 9px; right: 9px; height: 2px; background: #777; }
.logo { margin-left: auto; display: flex; align-items: center; gap: 4px; }
.mark { width: 16px; height: 25px; }
.word { display: flex; flex-direction: column; align-items: flex-end; font: 500 16px/14px Inter, sans-serif; letter-spacing: 3px; padding-top: 7px; }
.word small { font-size: 5px; line-height: 6px; letter-spacing: 2px; color: #bbb; }

/* Houdini */
.houdini { font: 10px/1 "Noto Sans CJK JP", sans-serif; color: #b8b8b8; background: #3a3a3a; }
.h-menu { flex: none; height: 21px; display: flex; align-items: center; gap: 8px; padding-left: 13px; background: linear-gradient(#3a3a3a, #303030); }
.h-open { background: #b86800; color: #ddd; padding: 0 5px; }
.h-menu .menu-host { margin-left: -4px; }
.h-drop { width: 98px; background: #3a3a3a; border: solid #666; border-width: 0 0 1px 1px; }
.h-drop button { padding-left: 7px; }
.h-drop .on { background: #b86800; color: #e0e0e0; }
.h-drop .cursor { left: 44px; top: 44px; }
.h-desk { display: flex; align-items: center; gap: 5px; margin-left: 10px; }
.h-pick { width: 89px; height: 18px; display: flex; align-items: center; gap: 4px; padding-left: 5px; background: #404040; }
.ud { width: 8px; height: 11px; margin-right: 4px; }
.h-shelves { flex: none; display: flex; height: 50px; border-top: 1px solid #1a1a1a; padding-left: 8px; }
.h-shelf { display: flex; flex-direction: column; min-width: 0; overflow: hidden; }
.h-shelf.wide { flex: 1; }
.h-shelf.narrow { flex: 0 0 132px; }
.h-split { width: 8px; background: #404040; border: solid #1a1a1a; border-width: 0 1px; }
.h-tabs { display: flex; height: 16px; background: #2a2a2a; font: 8px/1 Lato, sans-serif; }
.h-tabs button { padding: 0 6px; background: #333; border-right: 1px solid #161616; border-bottom: 1px solid #161616; }
.h-tabs .on { background: #484848; border-bottom: 0; }
.h-tabs .plus, .h-tabs .more { background: none; border: 0; font-size: 10px; padding: 0 7px; color: #ddd; }
.h-tabs .more { margin-left: auto; font-size: 6px; padding: 0 5px; }
.h-tools { flex: 1; display: flex; background: linear-gradient(#484848, #333); font: 8px/12px Lato, sans-serif; }
.h-tools button { min-width: 35px; padding: 2px 3px 0; flex-direction: column; justify-content: flex-start; gap: 3px; text-align: center; }
.h-tools .two { line-height: 8px; gap: 0; width: 58px; }
.h-tools.lights { padding-left: 14px; }
.h-panes { flex: none; display: flex; height: 16px; background: #2d2d2d; padding-left: 6px; font-size: 8px; border-top: 1px solid #1a1a1a; }
.h-panes button { padding: 0 6px; gap: 9px; border-right: 1px solid #1c1c1c; }
.h-panes b { font-size: 9px; width: 6px; }
.h-panes .on { background: #474747; }
.h-panes .plus { border: 0; font-size: 10px; color: #ddd; padding: 0 3px; }
.h-path { flex: none; display: flex; align-items: center; gap: 8px; height: 30px; padding: 5px 0 5px 11px; background: #454545; }
.h-field { flex: 1; margin-left: 1px; height: 20px; display: flex; align-items: center; gap: 4px; padding: 0 0 1px 5px; background: #3a3a3a; border: 1px solid #1a1a1a; }
.h-bar { flex: none; height: 26px; display: flex; align-items: center; margin-left: 6px; padding-left: 12px; background: #2d2d2d; border-top: 1px solid #1a1a1a; }
.h-bar-mid { display: flex; gap: 7px; margin-left: 418px; }
.h-bar-mid span { display: flex; border-left: 1px solid #484848; padding-left: 3px; margin-left: -3px; }
.h-bar-mid button { width: 20px; height: 20px; }
.h-bar-mid .on { background: #5a7597; }
.h-body { flex: 1; min-height: 0; display: flex; }
.h-rail { width: 6px; background: #4a4a4a; border-right: 1px solid #2a2a2a; }
.h-side { width: 29px; background: #3a3a3a; overflow: hidden; }
.h-cap { display: block; height: 9px; font-size: 7px; line-height: 8px; color: #111; padding-left: 1px; background: #555; border-bottom: 1px solid #222; }
.grp { display: flex; flex-direction: column; align-items: center; padding: 4px 0 3px; border-bottom: 1px solid #555; margin: 0 2px; }
.grp button { width: 22px; height: 24px; }
.grp.tight { padding: 5px 0 6px; }
.grp.tight button { height: 20px; width: 21px; background: #4a4a4a; border: 1px solid #222; }
.grp .on, .grp.tight .on { background: #6480a6; }
.h-view { background: linear-gradient(#68828e, #93a4ab); }
.h-label { position: relative; display: flex; align-items: center; gap: 7px; padding: 12px 0 0 13px; color: #fff; font-size: 11px; font-weight: 700; text-shadow: 1px 1px 1px #333; }

/* Maya */
.maya { font: 9px/1 "Noto Sans", sans-serif; color: #c6c6c6; background: #444; }
.m-menu { flex: none; height: 23px; display: flex; align-items: center; gap: 13px; padding-left: 12px; }
.m-menu .menu-host { margin: 0 -4px; }
.m-open { background: #5285a6; padding: 0 5px; }
.m-drop { width: 152px; background: linear-gradient(90deg, #444 17px, #525252 17px); border: 1px solid #333; padding: 1px 0 0 17px; box-shadow: 2px 2px 2px #2a2a2a; color: #ddd; }
.m-drop button { padding-left: 4px; }
.m-drop .on { background: #5285a6; }
.m-drop .cursor { left: 30px; top: 47px; }
.m-status { flex: none; height: 25px; display: flex; align-items: center; gap: 7px; padding-left: 1px; }
.m-status input { width: 84px; height: 19px; padding-left: 4px; background: #3f3f3f; border: 1px solid #373737; }
.grip { width: 2px; height: 12px; background: #777; flex: none; }
.grip.after { margin: 0 4px; }
.tri { font-size: 6px; color: #999; width: 6px; }
.m-snaps { display: flex; gap: 4px; }
.m-user { margin-left: 147px; width: 84px; height: 18px; padding-left: 2px; background: #595959; color: #eee; }
.m-caret { margin-left: -20px; font-size: 8px; color: #eee; pointer-events: none; }
.m-tabs { flex: none; height: 19px; border-top: 1px solid #333; padding-top: 4px; display: flex; background: linear-gradient(#444 4px, #373737 4px); color: #8e8e8e; }
.m-tabs button { padding: 0 10px; background: #3b3b3b; border-right: 2px solid #353535; }
.m-cut { width: 16px; overflow: hidden; display: flex; justify-content: flex-end; }
.m-tabs .push { margin-left: 132px; }
.m-shelf { flex: none; height: 40px; display: flex; align-items: center; gap: 6px; padding: 0 0 4px 9px; border-bottom: 1px solid #383838; }
.m-shelf .bar { width: 2px; height: 28px; background: #999; margin: 0 1px 0 0; }
.m-body { flex: 1; min-height: 0; display: flex; }
.m-side { width: 26px; background: #3a3a3a; padding-top: 40px; display: flex; flex-direction: column; }
.m-dd { height: 16px; background: #2b2b2b; margin-right: 6px; font-size: 8px; text-align: right; padding: 4px 3px 0 0; }
.m-scroll { flex: 1; margin-top: 4px; padding-left: 12px; display: flex; flex-direction: column; gap: 2px; font-size: 8px; }
.m-scroll i { flex: 1; width: 9px; background: #5a5a5a; border-radius: 4px 4px 0 0; }
.m-main { flex: 1; min-width: 0; display: flex; flex-direction: column; padding-left: 3px; }
.m-vmenu { flex: none; height: 22px; display: flex; align-items: center; gap: 14px; padding: 4px 0 0 8px; }
.m-vbar { flex: none; height: 18px; display: flex; align-items: center; padding-left: 3px; }
.m-vbar svg { width: 16px; height: 16px; padding: 2px; flex: none; }
.m-vbar svg.on { background: #4b7fa3; padding: 1px; }
.m-vbar .grip { margin: 0 4px; }
.m-vbar .grip:first-child { margin: 0 4px 0 0; }
.m-vbar input { width: 32px; height: 13px; background: #2b2b2b; padding-left: 4px; margin: 0 3px 0 1px; }
.m-cs { flex: 0 0 168px; height: 15px; margin-left: 2px; display: flex; align-items: center; background: #5a5a5a; color: #b0b0b0; }
.m-cs select { flex: 1; padding-left: 3px; }
.m-cs i { width: 16px; font-size: 7px; color: #ccc; text-align: center; border-left: 1px solid #4a4a4a; }
.m-view { background: #5b5b5b; }

/* Blender */
.blender { font: 500 9px/1 Inter, sans-serif; color: #d0d0d0; background: #181818; }
.b-top { flex: none; height: 23px; display: flex; background: #181818; }
.b-menu { display: flex; align-items: center; gap: 14px; padding: 0 0 2px 8px; width: 264px; }
.b-menu > svg { margin-right: -6px; }
.b-menu .menu-host { margin: 2px 0 0 -5px; align-self: center; }
.b-open { background: #2e2e2e; border-radius: 3px 3px 0 0; height: 15px; padding: 0 6px; }
.b-drop { width: 120px; background: #181818; border-radius: 3px; padding: 3px 2px; box-shadow: 0 1px 4px #111; color: #d8d8d8; }
.b-drop button { display: block; line-height: 17px; text-align: left; padding-left: 24px; border-radius: 2px; }
.b-drop u { text-underline-offset: 1px; }
.b-drop .on { background: #3d3d3d; }
.b-drop .cursor { left: 27px; top: 54px; }
.b-tabs { flex: 1; display: flex; overflow: hidden; padding-top: 4px; color: #9a9a9a; }
.b-tabs button { padding: 0 10px; height: 18px; }
.b-tabs .on { padding: 0 8px; background: #303030; color: #eee; border-radius: 3px 3px 0 0; height: 15px; margin-top: 2px; }
.b-head { flex: none; height: 22px; display: flex; align-items: center; gap: 5px; padding: 0 0 1px 8px; background: #303030; }
.chip { height: 15px; display: flex; align-items: center; gap: 1px; padding: 0 3px; background: #272727; border-radius: 2px; flex: none; }
.mode { width: 92px; gap: 5px; }
.mode select, .orient select { flex: 1; }
.orient { width: 64px; gap: 5px; }
.b-links { display: flex; gap: 13px; margin-left: 5px; }
.b-mid { display: flex; gap: 6px; margin-left: 358px; }
.chip.pair { padding: 0; }
.pair button { gap: 1px; padding: 0 2px; height: 15px; }
.lit { background: #505050; border-radius: 2px; }
.b-view { background: #3c3c3c; }
.b-modes { position: relative; width: 95px; height: 20px; background: #333; border-radius: 0 0 4px 0; display: flex; gap: 1px; padding: 2px 0 0 8px; }
.b-modes button { width: 15px; height: 15px; background: #525252; }
.b-modes .on { background: #3f6ab0; }
.b-row { position: relative; display: flex; gap: 16px; padding: 7px 0 0 8px; }
.b-tools, .b-tools div { display: flex; flex-direction: column; gap: 5px; }
.b-tools div { gap: 1px; }
.b-tools button { width: 32px; height: 29px; background: #262626; border-radius: 2px; }
.b-tools .on { background: #3f6ab0; }
.b-info { margin: 0; line-height: 15px; color: #e6e6e6; }

/* Nuke */
.nuke { font: 9px/1 "DejaVu Sans", sans-serif; color: #b0b0b0; background: #1a1a1a; }
.nuke .window { border: solid #666; border-width: 1px 0 0 1px; border-radius: 6px 0 0 0; background: #323232; }
.nuke .titlebar { height: 25px; background: #f3f3f3; padding: 0 0 2px 6px; gap: 5px; border-bottom: 1px solid #888; }
.n-menu { flex: none; height: 17px; display: flex; align-items: center; gap: 13px; padding-left: 7px; }
.n-menu .menu-host { margin-left: -4px; }
.n-open { background: #505050; padding: 0 3px; height: 14px; align-self: center; }
.n-drop { width: 240px; background: #323232; border: solid #222; border-width: 0 1px 1px; left: -1px; }
.n-drop button { display: grid; grid-template-columns: 148px 1fr; align-items: center; text-align: left; padding-left: 20px; }
.n-drop .on { background: linear-gradient(#fb9a2a, #dd8218); color: #4a3416; }
.n-drop .cursor { left: 50px; top: 63px; }
.n-body { flex: 1; min-height: 0; display: flex; overflow: hidden; }
.n-side { flex: none; width: 36px; display: flex; flex-direction: column; padding: 5px 1px 6px 0; border-right: 1px solid #1c1c1c; }
.n-side svg { flex: 1; min-height: 0; width: 33px; padding: 5px 8px 5px 7px; }
.n-main { flex: 1; min-width: 0; display: flex; flex-direction: column; }
.n-tabs { flex: none; height: 20px; display: flex; align-items: center; gap: 1px; background: #262626; }
.n-chip { width: 15px; height: 13px; margin-left: 3px; background: linear-gradient(90deg, #bbb 50%, #555 50%); }
.n-tabs button { align-self: stretch; justify-content: flex-start; width: 76px; padding: 3px 0 0 9px; background: #323232; color: #e08a28; gap: 11px; }
.n-tabs b { color: #777; font-weight: 400; font-size: 8px; }
.n-ctl { flex: none; height: 24px; display: flex; align-items: center; gap: 1px; padding-left: 7px; border-bottom: 1px solid #222; }
.n-ctl > i, .n-fps > i { width: 11px; color: #999; font-size: 9px; border-right: 1px solid #222; line-height: 12px; margin-right: 4px; }
.n-ctl .dim { color: #555; font-weight: 700; margin: 0 8px 0 0; }
.w18 { width: 14px; }
.w28 { width: 28px; }
.w30 { width: 28px; }
.w34 { width: 30px; }
.w40 { width: 38px; }
.w62 { width: 58px; }
.n-wipe { flex: none; margin-left: 245px; width: 146px; height: 18px; display: flex; align-items: center; gap: 8px; padding: 0 5px; border: 1px solid #1a1a1a; color: #777; }
.n-wipe b { color: #e08a28; font-weight: 400; }
.n-wipe span { margin-right: 24px; }
.n-wipe i:last-child { margin-left: auto; }
.n-vicons { margin: 0 -4px 0 auto; display: flex; gap: 8px; flex: none; }
.n-vicons svg { width: 12px; height: 12px; }
.n-exp { flex: none; height: 22px; display: flex; align-items: center; gap: 6px; padding-left: 6px; border-bottom: 1px solid #1c1c1c; }
.n-exp button { font-size: 9px; width: 7px; }
.n-exp span { padding: 0 1px; }
.n-exp input[type="text"] { width: 32px; height: 16px; padding-left: 3px; background: #383838; border: 1px solid #242424; }
.n-scale { position: relative; height: 21px; flex: none; }
.n-scale svg { width: 100%; height: 100%; }
.gain { width: 516px; }
.sat { width: 246px; }
.n-scale input { position: absolute; left: 0; top: 2px; width: 100%; height: 10px; }
.n-scale input::-webkit-slider-thumb { appearance: none; width: 3px; height: 7px; background: #8a6a2a; }
.roi { margin-left: auto; margin-right: -4px; }
svg text { font: 10px "DejaVu Sans", sans-serif; }
#timeline text { font-size: 9px; }
.n-scale svg text { font-size: 7px; }
.n-view { background: #000; }
.n-info { flex: none; height: 15px; display: grid; grid-template-columns: 515px 1fr; align-items: center; padding: 2px 0 0 6px; background: #000; border-top: 1px solid #222; color: #c4c4c4; }
.n-time { flex: none; height: 35px; display: flex; background: #2d2d2d; }
.n-in { flex: none; width: 42px; margin: 7px 0 2px 2px; background: #323232; display: flex; align-items: center; justify-content: center; color: #777; }
#timeline { flex: 1; min-width: 0; height: 35px; }
.n-play { flex: none; height: 22px; display: flex; align-items: center; }
.n-fps { display: flex; align-items: center; gap: 1px; padding-left: 5px; width: 325px; }
.boxed { background: #2b2b2b; height: 17px; }
.n-keys { display: flex; align-items: center; gap: 1px; }
.n-keys > svg { margin-right: 7px; }
.n-keys button { width: 25px; height: 19px; background: linear-gradient(#505050, #3c3c3c); border: 1px solid #252525; }
.n-keys .thin { width: 14px; }
.n-keys input { width: 40px; text-align: center; color: #e08a28; }
.n-skip { display: flex; align-items: center; gap: 3px; margin-left: 12px; }
.n-skip button { width: 17px; height: 17px; background: #484848; }
.n-end { margin-left: auto; display: flex; gap: 6px; }
.n-end button { width: 12px; height: 10px; border: 2px solid #888; }
.n-end button:last-child { width: 4px; border-right: 0; }
.n-foot { flex: none; height: 10px; margin-top: 1px; display: flex; align-items: flex-end; gap: 4px; background: #262626; border-top: 2px solid #1a1a1a; overflow: hidden; }
.n-foot .n-chip { height: 5px; }
.n-tabstub { width: 94px; height: 7px; background: #323232; }
```
FILE: scene.js
```
// Builds the perspective floor grids and the tick scales.
function floorGrid(o, v1, v2, a, b, range, sub) {
  const [u0, u1, w0, w1] = range;
  const at = (u, v) => {
    const w = 1 + u * a + v * b;
    return [(o[0] + u * a * v1[0] + v * b * v2[0]) / w, (o[1] + u * a * v1[1] + v * b * v2[1]) / w];
  };
  const depth = (u, v) => 1 + u * a + v * b;
  const line = (p, q) => {
    const eps = 0.04;
    const dp = depth(...p), dq = depth(...q);
    if (dp < eps && dq < eps) return "";
    const cut = (s, t, ds, dt) => { const k = (eps - ds) / (dt - ds); return [s[0] + (t[0] - s[0]) * k, s[1] + (t[1] - s[1]) * k]; };
    if (dp < eps) p = cut(p, q, dp, dq);
    else if (dq < eps) q = cut(q, p, dq, dp);
    return "M" + at(...p).map(n => n.toFixed(1)) + "L" + at(...q).map(n => n.toFixed(1));
  };
  let minor = "", major = "";
  for (let i = u0 * sub; i <= u1 * sub; i++) {
    const d = line([i / sub, w0], [i / sub, w1]);
    if (i % sub) minor += d; else major += d;
  }
  for (let i = w0 * sub; i <= w1 * sub; i++) {
    const d = line([u0, i / sub], [u1, i / sub]);
    if (i % sub) minor += d; else major += d;
  }
  return { minor, major };
}

const set = (id, d) => document.getElementById(id).setAttribute("d", d);
const houdini = floorGrid([558.3, 465.7], [1961, -231], [-845, -231], 0.1138, 0.1138, [-4, 12, -4, 12], 5);
set("h-minor", houdini.minor);
set("h-major", houdini.major);
const blender = floorGrid([673.6, 406.7], [205, -68], [3100, -68], 0.44, 0.195, [-2, 8, -8, 7], 10);
set("b-minor", blender.minor);
set("b-major", blender.major);

const timeline = document.getElementById("timeline");
let ticks = '<path fill="#555" d="M3 4H1600V7H3Z"/>';
for (let f = 1; f <= 150; f++) {
  const x = Math.round((f - 1) * 9.22) + 3.5;
  const big = f === 1 || f % 10 === 0;
  ticks += `<path stroke="#999" d="M${x} ${big ? 15 : 18}V${big ? 22 : 21}"/>`;
  if (big) ticks += `<text x="${x + (f === 1 ? 2 : 0)}" y="33" fill="#b0b0b0" text-anchor="middle">${f}</text>`;
}
timeline.innerHTML = ticks + '<text x="3" y="13" fill="#f0902a">1</text><path fill="#f0902a" d="M0 14H8L4 20Z"/>';

function scale(id, width, marks, minor) {
  let out = `<path stroke="#1c1c1c" d="M0 8.500H${width}M0 10.500H${width}"/>`;
  minor.forEach(x => { out += `<path stroke="#222" d="M${x}.5 4V8"/>`; });
  marks.forEach(([x, label]) => { out += `<path stroke="#222" d="M${x}.5 2V10"/><text x="${x}" y="18" fill="#161616">${label}</text>`; });
  document.getElementById(id).innerHTML = out;
}
scale("gain-scale", 516, [[0, "0.015625"], [47, "0.1"], [65, "0.2"], [107, "1"], [125, "2"], [444, "2"], [483, "3"], [511, "4"]], [8, 14, 20, 26, 32, 38, 72, 80, 86, 92, 97, 102]);
scale("sat-scale", 246, [[0, "0"], [38, "0.1"], [77, "0.4"], [101, "0.7"], [122, "1"], [172, "2"], [212, "3"], [241, "4"]], [12, 18, 25, 31, 54, 66, 87, 94, 109, 115]);
```
